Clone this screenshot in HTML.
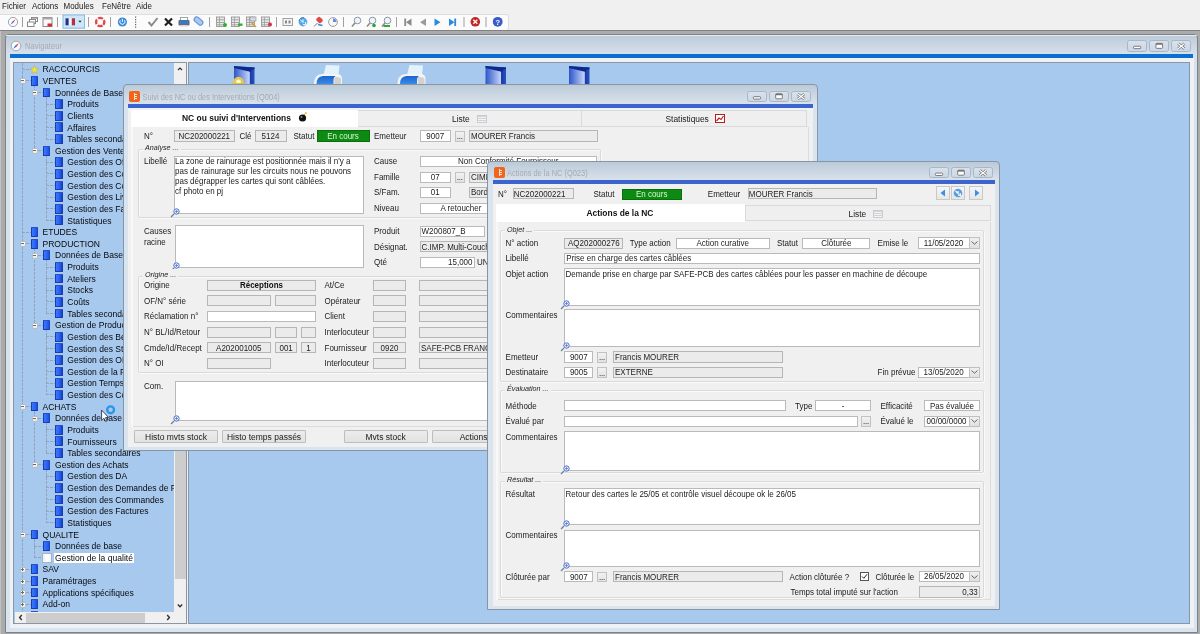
<!DOCTYPE html>
<html><head><meta charset="utf-8"><style>
html,body{margin:0;padding:0;width:1200px;height:634px;overflow:hidden;background:#ababab}
body{will-change:transform}
div{position:absolute}
.t{white-space:pre;font-family:"Liberation Sans",sans-serif;color:#111;transform-origin:0 7.8px;transform:scaleY(1.12)}
</style></head><body>
<div style="left:0px;top:0px;width:1200px;height:634px;background:#ababab"></div>
<div style="left:0px;top:0px;width:1200px;height:30px;background:#f0f0f0"></div>
<div class="t" style="left:2px;top:1.53px;font-size:8px;line-height:10px;color:#1a1a1a">Fichier</div>
<div class="t" style="left:32px;top:1.53px;font-size:8px;line-height:10px;color:#1a1a1a">Actions</div>
<div class="t" style="left:63.5px;top:1.53px;font-size:8px;line-height:10px;color:#1a1a1a">Modules</div>
<div class="t" style="left:102px;top:1.53px;font-size:8px;line-height:10px;color:#1a1a1a">FeNêtre</div>
<div class="t" style="left:136px;top:1.53px;font-size:8px;line-height:10px;color:#1a1a1a">Aide</div>
<div style="left:0px;top:13.5px;width:508px;height:15.5px;background:#fbfbfb;border:1px solid #dedede;border-left:none;border-radius:0 3px 3px 0"></div>
<div style="left:0px;top:29.5px;width:1200px;height:1.5px;background:#808080"></div>
<svg style="position:absolute;left:0;top:0" width="510" height="31" viewBox="0 0 510 31"><rect x="22.0" y="17" width="1" height="10" fill="#a0a0a0"/><rect x="57.0" y="17" width="1" height="10" fill="#a0a0a0"/><rect x="88.0" y="17" width="1" height="10" fill="#a0a0a0"/><rect x="110.0" y="17" width="1" height="10" fill="#a0a0a0"/><rect x="209.0" y="17" width="1" height="10" fill="#a0a0a0"/><rect x="276.0" y="17" width="1" height="10" fill="#a0a0a0"/><rect x="343.0" y="17" width="1" height="10" fill="#a0a0a0"/><rect x="396.0" y="17" width="1" height="10" fill="#a0a0a0"/><rect x="463.5" y="17" width="1" height="10" fill="#a0a0a0"/><rect x="485.5" y="17" width="1" height="10" fill="#a0a0a0"/><rect x="135" y="16.5" width="1.2" height="1.2" fill="#606060"/><rect x="135" y="19.0" width="1.2" height="1.2" fill="#606060"/><rect x="135" y="21.5" width="1.2" height="1.2" fill="#606060"/><rect x="135" y="24.0" width="1.2" height="1.2" fill="#606060"/><rect x="135" y="26.5" width="1.2" height="1.2" fill="#606060"/><circle cx="13" cy="22" r="4.6" fill="#fafcff" stroke="#9aa4b0" stroke-width="1"/><path d="M15.5 19.3 L13.6 22.6 L12.4 21.4Z" fill="#e04040"/><path d="M10.5 24.7 L12.4 21.4 L13.6 22.6Z" fill="#3a7ae0"/><rect x="31.5" y="17.5" width="6" height="4" fill="#fff" stroke="#888"/><rect x="29.5" y="19.5" width="6" height="4" fill="#fff" stroke="#888"/><rect x="27.5" y="22" width="6.5" height="4.5" fill="#fff" stroke="#888"/><rect x="31.5" y="17.5" width="6" height="1.2" fill="#999"/><rect x="43" y="17.5" width="9" height="9" fill="#fafafa" stroke="#8a8a8a"/><rect x="43" y="17.5" width="9" height="2" fill="#aaa"/><rect x="47.5" y="23.5" width="4.5" height="3" fill="#d03030"/><rect x="63" y="15" width="21.5" height="13.2" fill="#cde6f8" stroke="#84b9ea"/><rect x="65.5" y="18.3" width="3.3" height="7" fill="#1e3590"/><rect x="68.8" y="18.3" width="3" height="7" fill="#f4f4f8"/><rect x="71.8" y="18.3" width="3.2" height="7" fill="#b03048"/><path d="M78.5 20.8 L81.5 20.8 L80 22.6Z" fill="#111"/><circle cx="100.2" cy="22" r="4.1" fill="none" stroke="#e04848" stroke-width="2.4"/><circle cx="100.2" cy="22" r="4.1" fill="none" stroke="#fff" stroke-width="2.4" stroke-dasharray="1.6 4.84" stroke-dashoffset="0.8" transform="rotate(45 100.2 22)"/><circle cx="122.4" cy="22" r="4.6" fill="#3a8ad8"/><path d="M120.2 20.3 A2.6 2.6 0 1 0 124.6 20.3" stroke="#fff" stroke-width="1" fill="none"/><rect x="121.9" y="18.8" width="1" height="3" fill="#fff"/><path d="M148.5 22 L151.5 25.5 L157.5 18" stroke="#8a8a8a" stroke-width="2" fill="none"/><path d="M165 18.5 L172 25.5 M172 18.5 L165 25.5" stroke="#202020" stroke-width="2.2"/><rect x="180.5" y="17.5" width="7" height="3" fill="#fff" stroke="#9aa"/><rect x="178.5" y="20" width="11" height="5.5" rx="1" fill="#5a6e88"/><rect x="180" y="21" width="8" height="3" fill="#3a78c8"/><rect x="180.5" y="25" width="7" height="1.8" fill="#ddd"/><rect x="193.5" y="18.5" width="10" height="5" rx="2.5" fill="#a8c8f0" stroke="#5a8ad8" stroke-width="1" transform="rotate(40 198.5 21)"/><rect x="216.5" y="17" width="8" height="9.5" fill="#e8e8e8" stroke="#8a8a8a" stroke-width="0.8"/><rect x="217.0" y="19.5" width="7" height="0.7" fill="#8a8a8a"/><rect x="217.0" y="22" width="7" height="0.7" fill="#8a8a8a"/><rect x="217.0" y="24.5" width="7" height="0.7" fill="#8a8a8a"/><rect x="219.0" y="17" width="0.7" height="9.5" fill="#9a9a9a"/><rect x="231.5" y="17" width="8" height="9.5" fill="#e8e8e8" stroke="#8a8a8a" stroke-width="0.8"/><rect x="232.0" y="19.5" width="7" height="0.7" fill="#8a8a8a"/><rect x="232.0" y="22" width="7" height="0.7" fill="#8a8a8a"/><rect x="232.0" y="24.5" width="7" height="0.7" fill="#8a8a8a"/><rect x="234.0" y="17" width="0.7" height="9.5" fill="#9a9a9a"/><rect x="246.5" y="17" width="8" height="9.5" fill="#e8e8e8" stroke="#8a8a8a" stroke-width="0.8"/><rect x="247.0" y="19.5" width="7" height="0.7" fill="#8a8a8a"/><rect x="247.0" y="22" width="7" height="0.7" fill="#8a8a8a"/><rect x="247.0" y="24.5" width="7" height="0.7" fill="#8a8a8a"/><rect x="249.0" y="17" width="0.7" height="9.5" fill="#9a9a9a"/><rect x="261.5" y="17" width="8" height="9.5" fill="#e8e8e8" stroke="#8a8a8a" stroke-width="0.8"/><rect x="262.0" y="19.5" width="7" height="0.7" fill="#8a8a8a"/><rect x="262.0" y="22" width="7" height="0.7" fill="#8a8a8a"/><rect x="262.0" y="24.5" width="7" height="0.7" fill="#8a8a8a"/><rect x="264.0" y="17" width="0.7" height="9.5" fill="#9a9a9a"/><circle cx="225" cy="25" r="2" fill="#2cb030"/><rect x="238" y="23.5" width="4.5" height="2.4" fill="#30b030"/><path d="M251 22 L256 27" stroke="#d0a020" stroke-width="1.5"/><rect x="250" y="17" width="6" height="4" fill="#d8d8e8" stroke="#8a8a8a" stroke-width="0.6"/><circle cx="270" cy="24.5" r="2" fill="#d83040"/><rect x="283" y="18.5" width="9.5" height="7" fill="#f6f6f6" stroke="#a0a0a0"/><rect x="285" y="20.5" width="2" height="3" fill="#888"/><rect x="288.5" y="20.5" width="2" height="3" fill="#888"/><circle cx="303" cy="22" r="4.4" fill="#5aa8e8"/><path d="M300 19.5 L303 22.5 L303 19.5 M303 24.5 L306 25 L305.5 22" stroke="#fff" stroke-width="1" fill="none"/><path d="M299 21 Q300 17 304 17.8" stroke="#2a78c8" stroke-width="1" fill="none"/><path d="M314 26.5 L317.5 23" stroke="#6a7a90" stroke-width="1"/><rect x="316.5" y="17.5" width="6" height="5" rx="1.5" fill="#e04848" transform="rotate(45 319.5 20)"/><path d="M318 24.5 L322.5 25.5" stroke="#3a88d8" stroke-width="1.5"/><circle cx="333" cy="22" r="4.4" fill="#f8f8f8" stroke="#9aa0a8" stroke-width="1"/><path d="M333 22 L333 18.5 A3.5 3.5 0 0 1 336.5 22Z" fill="#6a8ae0"/><circle cx="357.5" cy="20.5" r="3.3" fill="#eef4fa" stroke="#8a96a4" stroke-width="1"/><path d="M355.0 23 L352.0 26.5" stroke="#8a8a8a" stroke-width="1.6"/><circle cx="372.5" cy="20.5" r="3.3" fill="#eef4fa" stroke="#8a96a4" stroke-width="1"/><path d="M370.0 23 L367.0 26.5" stroke="#8a8a8a" stroke-width="1.6"/><circle cx="387.5" cy="20.5" r="3.3" fill="#eef4fa" stroke="#8a96a4" stroke-width="1"/><path d="M385.0 23 L382.0 26.5" stroke="#8a8a8a" stroke-width="1.6"/><circle cx="374" cy="25.5" r="1.8" fill="#20a830"/><rect x="383.5" y="25" width="6.5" height="2" fill="#30a840"/><rect x="404.3" y="18.5" width="1.8" height="7.5" fill="#8a8a8a"/><path d="M411.5 18.5 L406 22.2 L411.5 26Z" fill="#8a8a8a"/><path d="M426 18.5 L420 22.2 L426 26Z" fill="#9a9a9a"/><path d="M434.5 18.5 L440.5 22.2 L434.5 26Z" fill="#2a8ae0"/><path d="M449 18.5 L454.5 22.2 L449 26Z" fill="#2a8ae0"/><rect x="454.3" y="18.5" width="1.8" height="7.5" fill="#2a8ae0"/><circle cx="475.3" cy="21.8" r="4.8" fill="#c02828"/><path d="M473.3 19.8 L477.3 23.8 M477.3 19.8 L473.3 23.8" stroke="#fff" stroke-width="1.3"/><circle cx="497.7" cy="21.8" r="4.9" fill="#3a5ac8"/><text x="497.7" y="24.6" font-size="7.5" font-weight="bold" fill="#fff" text-anchor="middle" font-family="Liberation Sans">?</text></svg>
<div style="left:0px;top:31px;width:1.3px;height:603px;background:#c2c2c2"></div>
<div style="left:5px;top:34px;width:1193px;height:599px;background:linear-gradient(#bccad8,#d6e1ec 19px,#d9e4ef);border:1px solid #7c8089;border-radius:4px 4px 0 0;box-sizing:border-box"></div>
<div style="left:6px;top:35px;width:1191px;height:1px;background:#e4ecf4;border-radius:3px 3px 0 0"></div>
<div class="t" style="left:25px;top:42.45px;font-size:7.65px;line-height:10px;color:#a6aab0">Navigateur</div>
<svg style="position:absolute;left:10.3px;top:40.2px" width="12" height="12" viewBox="10.3 40.2 12 12"><circle cx="16.3" cy="46.2" r="4.8" fill="#fafcff" stroke="#a0a8b2" stroke-width="1"/><path d="M19.1 43.400000000000006 L17.0 46.900000000000006 L15.600000000000001 45.5Z" fill="#e04040"/><path d="M13.5 49.0 L15.600000000000001 45.5 L17.0 46.900000000000006Z" fill="#3a7ae0"/></svg>
<div style="left:10px;top:54px;width:1183px;height:4px;background:#0b6fd0"></div>
<div style="left:9.5px;top:58px;width:1184px;height:569.5px;background:#eff2f5"></div>
<div style="left:13px;top:62px;width:174px;height:562px;background:#a8c9ee;border:1px solid #8a96a6;box-sizing:border-box"></div>
<div style="left:188px;top:62px;width:1002px;height:562px;background:#a8c9ee;border:1px solid #8a96a6;box-sizing:border-box"></div>
<div style="left:15px;top:63px;width:159px;height:549px;overflow:hidden;background:#a8c9ee">
<div style="left:7px;top:0px;width:1px;height:556.91px;background:repeating-linear-gradient(#92a3bb 0 3px,transparent 3px 4px)"></div>
<div style="left:19px;top:17.929999999999993px;width:1px;height:69.78000000000002px;background:repeating-linear-gradient(#92a3bb 0 3px,transparent 3px 4px)"></div>
<div style="left:31px;top:29.560000000000002px;width:1px;height:46.51999999999998px;background:repeating-linear-gradient(#92a3bb 0 3px,transparent 3px 4px)"></div>
<div style="left:31px;top:87.71000000000001px;width:1px;height:69.78px;background:repeating-linear-gradient(#92a3bb 0 3px,transparent 3px 4px)"></div>
<div style="left:19px;top:180.75px;width:1px;height:81.41000000000003px;background:repeating-linear-gradient(#92a3bb 0 3px,transparent 3px 4px)"></div>
<div style="left:31px;top:192.38px;width:1px;height:58.150000000000034px;background:repeating-linear-gradient(#92a3bb 0 3px,transparent 3px 4px)"></div>
<div style="left:31px;top:262.16px;width:1px;height:69.78000000000003px;background:repeating-linear-gradient(#92a3bb 0 3px,transparent 3px 4px)"></div>
<div style="left:19px;top:343.57000000000005px;width:1px;height:58.14999999999998px;background:repeating-linear-gradient(#92a3bb 0 3px,transparent 3px 4px)"></div>
<div style="left:31px;top:355.20000000000005px;width:1px;height:34.889999999999986px;background:repeating-linear-gradient(#92a3bb 0 3px,transparent 3px 4px)"></div>
<div style="left:31px;top:401.72px;width:1px;height:58.14999999999998px;background:repeating-linear-gradient(#92a3bb 0 3px,transparent 3px 4px)"></div>
<div style="left:19px;top:471.5px;width:1px;height:23.25999999999999px;background:repeating-linear-gradient(#92a3bb 0 3px,transparent 3px 4px)"></div>
<div style="left:7px;top:5.80px;width:8.5px;height:1px;background:repeating-linear-gradient(90deg,#92a3bb 0 3px,transparent 3px 4px)"></div>
<svg style="position:absolute;left:15.0px;top:1.80px" width="9" height="9" viewBox="0 0 10 10"><path d="M5 0.4 L6.3 3.6 L9.7 3.8 L7.1 6 L7.9 9.4 L5 7.6 L2.1 9.4 L2.9 6 L0.3 3.8 L3.7 3.6Z" fill="#f2e24a" stroke="#c8b040" stroke-width="0.6"/></svg>
<div class="t" style="left:27.5px;top:1.39px;font-size:8.55px;line-height:10px;color:#05080e">RACCOURCIS</div>
<div style="left:7px;top:17.43px;width:8.5px;height:1px;background:repeating-linear-gradient(90deg,#92a3bb 0 3px,transparent 3px 4px)"></div>
<div style="left:4.5px;top:15.43px;width:4px;height:4px;border:1px solid #b4bcc6;border-radius:1.5px;background:linear-gradient(#fff,#e4e8ee)"></div>
<div style="left:6.0px;top:17.43px;width:3px;height:1px;background:#6a6a6a"></div>
<div style="left:15.5px;top:12.93px;width:7.5px;height:9.8px;background:linear-gradient(90deg,#1a3cb0 0,#1a3cb0 1px,#3a78fa 1px,#2a64f4 4px,#1a50dc 6px,#1a3cb0 7px);box-shadow:inset 0 -1px 0 #1a3cb0,inset 0 1px 0 #2a50c8;border-radius:0 1px 1px 0"></div>
<div class="t" style="left:27.5px;top:13.02px;font-size:8.55px;line-height:10px;color:#05080e">VENTES</div>
<div style="left:19px;top:29.06px;width:8.5px;height:1px;background:repeating-linear-gradient(90deg,#92a3bb 0 3px,transparent 3px 4px)"></div>
<div style="left:16.5px;top:27.06px;width:4px;height:4px;border:1px solid #b4bcc6;border-radius:1.5px;background:linear-gradient(#fff,#e4e8ee)"></div>
<div style="left:18.0px;top:29.06px;width:3px;height:1px;background:#6a6a6a"></div>
<div style="left:27.5px;top:24.56px;width:7.5px;height:9.8px;background:linear-gradient(90deg,#1a3cb0 0,#1a3cb0 1px,#3a78fa 1px,#2a64f4 4px,#1a50dc 6px,#1a3cb0 7px);box-shadow:inset 0 -1px 0 #1a3cb0,inset 0 1px 0 #2a50c8;border-radius:0 1px 1px 0"></div>
<div class="t" style="left:40px;top:24.65px;font-size:8.55px;line-height:10px;color:#05080e">Données de Base</div>
<div style="left:31px;top:40.69px;width:9px;height:1px;background:repeating-linear-gradient(90deg,#92a3bb 0 3px,transparent 3px 4px)"></div>
<div style="left:40px;top:36.19px;width:7.5px;height:9.8px;background:linear-gradient(90deg,#1a3cb0 0,#1a3cb0 1px,#3a78fa 1px,#2a64f4 4px,#1a50dc 6px,#1a3cb0 7px);box-shadow:inset 0 -1px 0 #1a3cb0,inset 0 1px 0 #2a50c8;border-radius:0 1px 1px 0"></div>
<div class="t" style="left:52.3px;top:36.28px;font-size:8.55px;line-height:10px;color:#05080e">Produits</div>
<div style="left:31px;top:52.32px;width:9px;height:1px;background:repeating-linear-gradient(90deg,#92a3bb 0 3px,transparent 3px 4px)"></div>
<div style="left:40px;top:47.82px;width:7.5px;height:9.8px;background:linear-gradient(90deg,#1a3cb0 0,#1a3cb0 1px,#3a78fa 1px,#2a64f4 4px,#1a50dc 6px,#1a3cb0 7px);box-shadow:inset 0 -1px 0 #1a3cb0,inset 0 1px 0 #2a50c8;border-radius:0 1px 1px 0"></div>
<div class="t" style="left:52.3px;top:47.91px;font-size:8.55px;line-height:10px;color:#05080e">Clients</div>
<div style="left:31px;top:63.95px;width:9px;height:1px;background:repeating-linear-gradient(90deg,#92a3bb 0 3px,transparent 3px 4px)"></div>
<div style="left:40px;top:59.45px;width:7.5px;height:9.8px;background:linear-gradient(90deg,#1a3cb0 0,#1a3cb0 1px,#3a78fa 1px,#2a64f4 4px,#1a50dc 6px,#1a3cb0 7px);box-shadow:inset 0 -1px 0 #1a3cb0,inset 0 1px 0 #2a50c8;border-radius:0 1px 1px 0"></div>
<div class="t" style="left:52.3px;top:59.54px;font-size:8.55px;line-height:10px;color:#05080e">Affaires</div>
<div style="left:31px;top:75.58px;width:9px;height:1px;background:repeating-linear-gradient(90deg,#92a3bb 0 3px,transparent 3px 4px)"></div>
<div style="left:40px;top:71.08px;width:7.5px;height:9.8px;background:linear-gradient(90deg,#1a3cb0 0,#1a3cb0 1px,#3a78fa 1px,#2a64f4 4px,#1a50dc 6px,#1a3cb0 7px);box-shadow:inset 0 -1px 0 #1a3cb0,inset 0 1px 0 #2a50c8;border-radius:0 1px 1px 0"></div>
<div class="t" style="left:52.3px;top:71.17px;font-size:8.55px;line-height:10px;color:#05080e">Tables secondaires</div>
<div style="left:19px;top:87.21px;width:8.5px;height:1px;background:repeating-linear-gradient(90deg,#92a3bb 0 3px,transparent 3px 4px)"></div>
<div style="left:16.5px;top:85.21px;width:4px;height:4px;border:1px solid #b4bcc6;border-radius:1.5px;background:linear-gradient(#fff,#e4e8ee)"></div>
<div style="left:18.0px;top:87.21px;width:3px;height:1px;background:#6a6a6a"></div>
<div style="left:27.5px;top:82.71px;width:7.5px;height:9.8px;background:linear-gradient(90deg,#1a3cb0 0,#1a3cb0 1px,#3a78fa 1px,#2a64f4 4px,#1a50dc 6px,#1a3cb0 7px);box-shadow:inset 0 -1px 0 #1a3cb0,inset 0 1px 0 #2a50c8;border-radius:0 1px 1px 0"></div>
<div class="t" style="left:40px;top:82.80px;font-size:8.55px;line-height:10px;color:#05080e">Gestion des Ventes</div>
<div style="left:31px;top:98.84px;width:9px;height:1px;background:repeating-linear-gradient(90deg,#92a3bb 0 3px,transparent 3px 4px)"></div>
<div style="left:40px;top:94.34px;width:7.5px;height:9.8px;background:linear-gradient(90deg,#1a3cb0 0,#1a3cb0 1px,#3a78fa 1px,#2a64f4 4px,#1a50dc 6px,#1a3cb0 7px);box-shadow:inset 0 -1px 0 #1a3cb0,inset 0 1px 0 #2a50c8;border-radius:0 1px 1px 0"></div>
<div class="t" style="left:52.3px;top:94.43px;font-size:8.55px;line-height:10px;color:#05080e">Gestion des Offres</div>
<div style="left:31px;top:110.47px;width:9px;height:1px;background:repeating-linear-gradient(90deg,#92a3bb 0 3px,transparent 3px 4px)"></div>
<div style="left:40px;top:105.97px;width:7.5px;height:9.8px;background:linear-gradient(90deg,#1a3cb0 0,#1a3cb0 1px,#3a78fa 1px,#2a64f4 4px,#1a50dc 6px,#1a3cb0 7px);box-shadow:inset 0 -1px 0 #1a3cb0,inset 0 1px 0 #2a50c8;border-radius:0 1px 1px 0"></div>
<div class="t" style="left:52.3px;top:106.06px;font-size:8.55px;line-height:10px;color:#05080e">Gestion des Commandes</div>
<div style="left:31px;top:122.10px;width:9px;height:1px;background:repeating-linear-gradient(90deg,#92a3bb 0 3px,transparent 3px 4px)"></div>
<div style="left:40px;top:117.60px;width:7.5px;height:9.8px;background:linear-gradient(90deg,#1a3cb0 0,#1a3cb0 1px,#3a78fa 1px,#2a64f4 4px,#1a50dc 6px,#1a3cb0 7px);box-shadow:inset 0 -1px 0 #1a3cb0,inset 0 1px 0 #2a50c8;border-radius:0 1px 1px 0"></div>
<div class="t" style="left:52.3px;top:117.69px;font-size:8.55px;line-height:10px;color:#05080e">Gestion des Contrats</div>
<div style="left:31px;top:133.73px;width:9px;height:1px;background:repeating-linear-gradient(90deg,#92a3bb 0 3px,transparent 3px 4px)"></div>
<div style="left:40px;top:129.23px;width:7.5px;height:9.8px;background:linear-gradient(90deg,#1a3cb0 0,#1a3cb0 1px,#3a78fa 1px,#2a64f4 4px,#1a50dc 6px,#1a3cb0 7px);box-shadow:inset 0 -1px 0 #1a3cb0,inset 0 1px 0 #2a50c8;border-radius:0 1px 1px 0"></div>
<div class="t" style="left:52.3px;top:129.32px;font-size:8.55px;line-height:10px;color:#05080e">Gestion des Livraisons</div>
<div style="left:31px;top:145.36px;width:9px;height:1px;background:repeating-linear-gradient(90deg,#92a3bb 0 3px,transparent 3px 4px)"></div>
<div style="left:40px;top:140.86px;width:7.5px;height:9.8px;background:linear-gradient(90deg,#1a3cb0 0,#1a3cb0 1px,#3a78fa 1px,#2a64f4 4px,#1a50dc 6px,#1a3cb0 7px);box-shadow:inset 0 -1px 0 #1a3cb0,inset 0 1px 0 #2a50c8;border-radius:0 1px 1px 0"></div>
<div class="t" style="left:52.3px;top:140.95px;font-size:8.55px;line-height:10px;color:#05080e">Gestion des Factures</div>
<div style="left:31px;top:156.99px;width:9px;height:1px;background:repeating-linear-gradient(90deg,#92a3bb 0 3px,transparent 3px 4px)"></div>
<div style="left:40px;top:152.49px;width:7.5px;height:9.8px;background:linear-gradient(90deg,#1a3cb0 0,#1a3cb0 1px,#3a78fa 1px,#2a64f4 4px,#1a50dc 6px,#1a3cb0 7px);box-shadow:inset 0 -1px 0 #1a3cb0,inset 0 1px 0 #2a50c8;border-radius:0 1px 1px 0"></div>
<div class="t" style="left:52.3px;top:152.58px;font-size:8.55px;line-height:10px;color:#05080e">Statistiques</div>
<div style="left:7px;top:168.62px;width:8.5px;height:1px;background:repeating-linear-gradient(90deg,#92a3bb 0 3px,transparent 3px 4px)"></div>
<div style="left:15.5px;top:164.12px;width:7.5px;height:9.8px;background:linear-gradient(90deg,#1a3cb0 0,#1a3cb0 1px,#3a78fa 1px,#2a64f4 4px,#1a50dc 6px,#1a3cb0 7px);box-shadow:inset 0 -1px 0 #1a3cb0,inset 0 1px 0 #2a50c8;border-radius:0 1px 1px 0"></div>
<div class="t" style="left:27.5px;top:164.21px;font-size:8.55px;line-height:10px;color:#05080e">ETUDES</div>
<div style="left:7px;top:180.25px;width:8.5px;height:1px;background:repeating-linear-gradient(90deg,#92a3bb 0 3px,transparent 3px 4px)"></div>
<div style="left:4.5px;top:178.25px;width:4px;height:4px;border:1px solid #b4bcc6;border-radius:1.5px;background:linear-gradient(#fff,#e4e8ee)"></div>
<div style="left:6.0px;top:180.25px;width:3px;height:1px;background:#6a6a6a"></div>
<div style="left:15.5px;top:175.75px;width:7.5px;height:9.8px;background:linear-gradient(90deg,#1a3cb0 0,#1a3cb0 1px,#3a78fa 1px,#2a64f4 4px,#1a50dc 6px,#1a3cb0 7px);box-shadow:inset 0 -1px 0 #1a3cb0,inset 0 1px 0 #2a50c8;border-radius:0 1px 1px 0"></div>
<div class="t" style="left:27.5px;top:175.84px;font-size:8.55px;line-height:10px;color:#05080e">PRODUCTION</div>
<div style="left:19px;top:191.88px;width:8.5px;height:1px;background:repeating-linear-gradient(90deg,#92a3bb 0 3px,transparent 3px 4px)"></div>
<div style="left:16.5px;top:189.88px;width:4px;height:4px;border:1px solid #b4bcc6;border-radius:1.5px;background:linear-gradient(#fff,#e4e8ee)"></div>
<div style="left:18.0px;top:191.88px;width:3px;height:1px;background:#6a6a6a"></div>
<div style="left:27.5px;top:187.38px;width:7.5px;height:9.8px;background:linear-gradient(90deg,#1a3cb0 0,#1a3cb0 1px,#3a78fa 1px,#2a64f4 4px,#1a50dc 6px,#1a3cb0 7px);box-shadow:inset 0 -1px 0 #1a3cb0,inset 0 1px 0 #2a50c8;border-radius:0 1px 1px 0"></div>
<div class="t" style="left:40px;top:187.47px;font-size:8.55px;line-height:10px;color:#05080e">Données de Base</div>
<div style="left:31px;top:203.51px;width:9px;height:1px;background:repeating-linear-gradient(90deg,#92a3bb 0 3px,transparent 3px 4px)"></div>
<div style="left:40px;top:199.01px;width:7.5px;height:9.8px;background:linear-gradient(90deg,#1a3cb0 0,#1a3cb0 1px,#3a78fa 1px,#2a64f4 4px,#1a50dc 6px,#1a3cb0 7px);box-shadow:inset 0 -1px 0 #1a3cb0,inset 0 1px 0 #2a50c8;border-radius:0 1px 1px 0"></div>
<div class="t" style="left:52.3px;top:199.10px;font-size:8.55px;line-height:10px;color:#05080e">Produits</div>
<div style="left:31px;top:215.14px;width:9px;height:1px;background:repeating-linear-gradient(90deg,#92a3bb 0 3px,transparent 3px 4px)"></div>
<div style="left:40px;top:210.64px;width:7.5px;height:9.8px;background:linear-gradient(90deg,#1a3cb0 0,#1a3cb0 1px,#3a78fa 1px,#2a64f4 4px,#1a50dc 6px,#1a3cb0 7px);box-shadow:inset 0 -1px 0 #1a3cb0,inset 0 1px 0 #2a50c8;border-radius:0 1px 1px 0"></div>
<div class="t" style="left:52.3px;top:210.73px;font-size:8.55px;line-height:10px;color:#05080e">Ateliers</div>
<div style="left:31px;top:226.77px;width:9px;height:1px;background:repeating-linear-gradient(90deg,#92a3bb 0 3px,transparent 3px 4px)"></div>
<div style="left:40px;top:222.27px;width:7.5px;height:9.8px;background:linear-gradient(90deg,#1a3cb0 0,#1a3cb0 1px,#3a78fa 1px,#2a64f4 4px,#1a50dc 6px,#1a3cb0 7px);box-shadow:inset 0 -1px 0 #1a3cb0,inset 0 1px 0 #2a50c8;border-radius:0 1px 1px 0"></div>
<div class="t" style="left:52.3px;top:222.36px;font-size:8.55px;line-height:10px;color:#05080e">Stocks</div>
<div style="left:31px;top:238.40px;width:9px;height:1px;background:repeating-linear-gradient(90deg,#92a3bb 0 3px,transparent 3px 4px)"></div>
<div style="left:40px;top:233.90px;width:7.5px;height:9.8px;background:linear-gradient(90deg,#1a3cb0 0,#1a3cb0 1px,#3a78fa 1px,#2a64f4 4px,#1a50dc 6px,#1a3cb0 7px);box-shadow:inset 0 -1px 0 #1a3cb0,inset 0 1px 0 #2a50c8;border-radius:0 1px 1px 0"></div>
<div class="t" style="left:52.3px;top:233.99px;font-size:8.55px;line-height:10px;color:#05080e">Coûts</div>
<div style="left:31px;top:250.03px;width:9px;height:1px;background:repeating-linear-gradient(90deg,#92a3bb 0 3px,transparent 3px 4px)"></div>
<div style="left:40px;top:245.53px;width:7.5px;height:9.8px;background:linear-gradient(90deg,#1a3cb0 0,#1a3cb0 1px,#3a78fa 1px,#2a64f4 4px,#1a50dc 6px,#1a3cb0 7px);box-shadow:inset 0 -1px 0 #1a3cb0,inset 0 1px 0 #2a50c8;border-radius:0 1px 1px 0"></div>
<div class="t" style="left:52.3px;top:245.62px;font-size:8.55px;line-height:10px;color:#05080e">Tables secondaires</div>
<div style="left:19px;top:261.66px;width:8.5px;height:1px;background:repeating-linear-gradient(90deg,#92a3bb 0 3px,transparent 3px 4px)"></div>
<div style="left:16.5px;top:259.66px;width:4px;height:4px;border:1px solid #b4bcc6;border-radius:1.5px;background:linear-gradient(#fff,#e4e8ee)"></div>
<div style="left:18.0px;top:261.66px;width:3px;height:1px;background:#6a6a6a"></div>
<div style="left:27.5px;top:257.16px;width:7.5px;height:9.8px;background:linear-gradient(90deg,#1a3cb0 0,#1a3cb0 1px,#3a78fa 1px,#2a64f4 4px,#1a50dc 6px,#1a3cb0 7px);box-shadow:inset 0 -1px 0 #1a3cb0,inset 0 1px 0 #2a50c8;border-radius:0 1px 1px 0"></div>
<div class="t" style="left:40px;top:257.25px;font-size:8.55px;line-height:10px;color:#05080e">Gestion de Production</div>
<div style="left:31px;top:273.29px;width:9px;height:1px;background:repeating-linear-gradient(90deg,#92a3bb 0 3px,transparent 3px 4px)"></div>
<div style="left:40px;top:268.79px;width:7.5px;height:9.8px;background:linear-gradient(90deg,#1a3cb0 0,#1a3cb0 1px,#3a78fa 1px,#2a64f4 4px,#1a50dc 6px,#1a3cb0 7px);box-shadow:inset 0 -1px 0 #1a3cb0,inset 0 1px 0 #2a50c8;border-radius:0 1px 1px 0"></div>
<div class="t" style="left:52.3px;top:268.88px;font-size:8.55px;line-height:10px;color:#05080e">Gestion des Besoins</div>
<div style="left:31px;top:284.92px;width:9px;height:1px;background:repeating-linear-gradient(90deg,#92a3bb 0 3px,transparent 3px 4px)"></div>
<div style="left:40px;top:280.42px;width:7.5px;height:9.8px;background:linear-gradient(90deg,#1a3cb0 0,#1a3cb0 1px,#3a78fa 1px,#2a64f4 4px,#1a50dc 6px,#1a3cb0 7px);box-shadow:inset 0 -1px 0 #1a3cb0,inset 0 1px 0 #2a50c8;border-radius:0 1px 1px 0"></div>
<div class="t" style="left:52.3px;top:280.51px;font-size:8.55px;line-height:10px;color:#05080e">Gestion des Stocks</div>
<div style="left:31px;top:296.55px;width:9px;height:1px;background:repeating-linear-gradient(90deg,#92a3bb 0 3px,transparent 3px 4px)"></div>
<div style="left:40px;top:292.05px;width:7.5px;height:9.8px;background:linear-gradient(90deg,#1a3cb0 0,#1a3cb0 1px,#3a78fa 1px,#2a64f4 4px,#1a50dc 6px,#1a3cb0 7px);box-shadow:inset 0 -1px 0 #1a3cb0,inset 0 1px 0 #2a50c8;border-radius:0 1px 1px 0"></div>
<div class="t" style="left:52.3px;top:292.14px;font-size:8.55px;line-height:10px;color:#05080e">Gestion des OF</div>
<div style="left:31px;top:308.18px;width:9px;height:1px;background:repeating-linear-gradient(90deg,#92a3bb 0 3px,transparent 3px 4px)"></div>
<div style="left:40px;top:303.68px;width:7.5px;height:9.8px;background:linear-gradient(90deg,#1a3cb0 0,#1a3cb0 1px,#3a78fa 1px,#2a64f4 4px,#1a50dc 6px,#1a3cb0 7px);box-shadow:inset 0 -1px 0 #1a3cb0,inset 0 1px 0 #2a50c8;border-radius:0 1px 1px 0"></div>
<div class="t" style="left:52.3px;top:303.77px;font-size:8.55px;line-height:10px;color:#05080e">Gestion de la Production</div>
<div style="left:31px;top:319.81px;width:9px;height:1px;background:repeating-linear-gradient(90deg,#92a3bb 0 3px,transparent 3px 4px)"></div>
<div style="left:40px;top:315.31px;width:7.5px;height:9.8px;background:linear-gradient(90deg,#1a3cb0 0,#1a3cb0 1px,#3a78fa 1px,#2a64f4 4px,#1a50dc 6px,#1a3cb0 7px);box-shadow:inset 0 -1px 0 #1a3cb0,inset 0 1px 0 #2a50c8;border-radius:0 1px 1px 0"></div>
<div class="t" style="left:52.3px;top:315.40px;font-size:8.55px;line-height:10px;color:#05080e">Gestion Temps</div>
<div style="left:31px;top:331.44px;width:9px;height:1px;background:repeating-linear-gradient(90deg,#92a3bb 0 3px,transparent 3px 4px)"></div>
<div style="left:40px;top:326.94px;width:7.5px;height:9.8px;background:linear-gradient(90deg,#1a3cb0 0,#1a3cb0 1px,#3a78fa 1px,#2a64f4 4px,#1a50dc 6px,#1a3cb0 7px);box-shadow:inset 0 -1px 0 #1a3cb0,inset 0 1px 0 #2a50c8;border-radius:0 1px 1px 0"></div>
<div class="t" style="left:52.3px;top:327.03px;font-size:8.55px;line-height:10px;color:#05080e">Gestion des Coûts</div>
<div style="left:7px;top:343.07px;width:8.5px;height:1px;background:repeating-linear-gradient(90deg,#92a3bb 0 3px,transparent 3px 4px)"></div>
<div style="left:4.5px;top:341.07px;width:4px;height:4px;border:1px solid #b4bcc6;border-radius:1.5px;background:linear-gradient(#fff,#e4e8ee)"></div>
<div style="left:6.0px;top:343.07px;width:3px;height:1px;background:#6a6a6a"></div>
<div style="left:15.5px;top:338.57px;width:7.5px;height:9.8px;background:linear-gradient(90deg,#1a3cb0 0,#1a3cb0 1px,#3a78fa 1px,#2a64f4 4px,#1a50dc 6px,#1a3cb0 7px);box-shadow:inset 0 -1px 0 #1a3cb0,inset 0 1px 0 #2a50c8;border-radius:0 1px 1px 0"></div>
<div class="t" style="left:27.5px;top:338.66px;font-size:8.55px;line-height:10px;color:#05080e">ACHATS</div>
<div style="left:19px;top:354.70px;width:8.5px;height:1px;background:repeating-linear-gradient(90deg,#92a3bb 0 3px,transparent 3px 4px)"></div>
<div style="left:16.5px;top:352.70px;width:4px;height:4px;border:1px solid #b4bcc6;border-radius:1.5px;background:linear-gradient(#fff,#e4e8ee)"></div>
<div style="left:18.0px;top:354.70px;width:3px;height:1px;background:#6a6a6a"></div>
<div style="left:27.5px;top:350.20px;width:7.5px;height:9.8px;background:linear-gradient(90deg,#1a3cb0 0,#1a3cb0 1px,#3a78fa 1px,#2a64f4 4px,#1a50dc 6px,#1a3cb0 7px);box-shadow:inset 0 -1px 0 #1a3cb0,inset 0 1px 0 #2a50c8;border-radius:0 1px 1px 0"></div>
<div class="t" style="left:40px;top:350.29px;font-size:8.55px;line-height:10px;color:#05080e">Données de base</div>
<div style="left:31px;top:366.33px;width:9px;height:1px;background:repeating-linear-gradient(90deg,#92a3bb 0 3px,transparent 3px 4px)"></div>
<div style="left:40px;top:361.83px;width:7.5px;height:9.8px;background:linear-gradient(90deg,#1a3cb0 0,#1a3cb0 1px,#3a78fa 1px,#2a64f4 4px,#1a50dc 6px,#1a3cb0 7px);box-shadow:inset 0 -1px 0 #1a3cb0,inset 0 1px 0 #2a50c8;border-radius:0 1px 1px 0"></div>
<div class="t" style="left:52.3px;top:361.92px;font-size:8.55px;line-height:10px;color:#05080e">Produits</div>
<div style="left:31px;top:377.96px;width:9px;height:1px;background:repeating-linear-gradient(90deg,#92a3bb 0 3px,transparent 3px 4px)"></div>
<div style="left:40px;top:373.46px;width:7.5px;height:9.8px;background:linear-gradient(90deg,#1a3cb0 0,#1a3cb0 1px,#3a78fa 1px,#2a64f4 4px,#1a50dc 6px,#1a3cb0 7px);box-shadow:inset 0 -1px 0 #1a3cb0,inset 0 1px 0 #2a50c8;border-radius:0 1px 1px 0"></div>
<div class="t" style="left:52.3px;top:373.55px;font-size:8.55px;line-height:10px;color:#05080e">Fournisseurs</div>
<div style="left:31px;top:389.59px;width:9px;height:1px;background:repeating-linear-gradient(90deg,#92a3bb 0 3px,transparent 3px 4px)"></div>
<div style="left:40px;top:385.09px;width:7.5px;height:9.8px;background:linear-gradient(90deg,#1a3cb0 0,#1a3cb0 1px,#3a78fa 1px,#2a64f4 4px,#1a50dc 6px,#1a3cb0 7px);box-shadow:inset 0 -1px 0 #1a3cb0,inset 0 1px 0 #2a50c8;border-radius:0 1px 1px 0"></div>
<div class="t" style="left:52.3px;top:385.18px;font-size:8.55px;line-height:10px;color:#05080e">Tables secondaires</div>
<div style="left:19px;top:401.22px;width:8.5px;height:1px;background:repeating-linear-gradient(90deg,#92a3bb 0 3px,transparent 3px 4px)"></div>
<div style="left:16.5px;top:399.22px;width:4px;height:4px;border:1px solid #b4bcc6;border-radius:1.5px;background:linear-gradient(#fff,#e4e8ee)"></div>
<div style="left:18.0px;top:401.22px;width:3px;height:1px;background:#6a6a6a"></div>
<div style="left:27.5px;top:396.72px;width:7.5px;height:9.8px;background:linear-gradient(90deg,#1a3cb0 0,#1a3cb0 1px,#3a78fa 1px,#2a64f4 4px,#1a50dc 6px,#1a3cb0 7px);box-shadow:inset 0 -1px 0 #1a3cb0,inset 0 1px 0 #2a50c8;border-radius:0 1px 1px 0"></div>
<div class="t" style="left:40px;top:396.81px;font-size:8.55px;line-height:10px;color:#05080e">Gestion des Achats</div>
<div style="left:31px;top:412.85px;width:9px;height:1px;background:repeating-linear-gradient(90deg,#92a3bb 0 3px,transparent 3px 4px)"></div>
<div style="left:40px;top:408.35px;width:7.5px;height:9.8px;background:linear-gradient(90deg,#1a3cb0 0,#1a3cb0 1px,#3a78fa 1px,#2a64f4 4px,#1a50dc 6px,#1a3cb0 7px);box-shadow:inset 0 -1px 0 #1a3cb0,inset 0 1px 0 #2a50c8;border-radius:0 1px 1px 0"></div>
<div class="t" style="left:52.3px;top:408.44px;font-size:8.55px;line-height:10px;color:#05080e">Gestion des DA</div>
<div style="left:31px;top:424.48px;width:9px;height:1px;background:repeating-linear-gradient(90deg,#92a3bb 0 3px,transparent 3px 4px)"></div>
<div style="left:40px;top:419.98px;width:7.5px;height:9.8px;background:linear-gradient(90deg,#1a3cb0 0,#1a3cb0 1px,#3a78fa 1px,#2a64f4 4px,#1a50dc 6px,#1a3cb0 7px);box-shadow:inset 0 -1px 0 #1a3cb0,inset 0 1px 0 #2a50c8;border-radius:0 1px 1px 0"></div>
<div class="t" style="left:52.3px;top:420.07px;font-size:8.55px;line-height:10px;color:#05080e">Gestion des Demandes de Prix</div>
<div style="left:31px;top:436.11px;width:9px;height:1px;background:repeating-linear-gradient(90deg,#92a3bb 0 3px,transparent 3px 4px)"></div>
<div style="left:40px;top:431.61px;width:7.5px;height:9.8px;background:linear-gradient(90deg,#1a3cb0 0,#1a3cb0 1px,#3a78fa 1px,#2a64f4 4px,#1a50dc 6px,#1a3cb0 7px);box-shadow:inset 0 -1px 0 #1a3cb0,inset 0 1px 0 #2a50c8;border-radius:0 1px 1px 0"></div>
<div class="t" style="left:52.3px;top:431.70px;font-size:8.55px;line-height:10px;color:#05080e">Gestion des Commandes</div>
<div style="left:31px;top:447.74px;width:9px;height:1px;background:repeating-linear-gradient(90deg,#92a3bb 0 3px,transparent 3px 4px)"></div>
<div style="left:40px;top:443.24px;width:7.5px;height:9.8px;background:linear-gradient(90deg,#1a3cb0 0,#1a3cb0 1px,#3a78fa 1px,#2a64f4 4px,#1a50dc 6px,#1a3cb0 7px);box-shadow:inset 0 -1px 0 #1a3cb0,inset 0 1px 0 #2a50c8;border-radius:0 1px 1px 0"></div>
<div class="t" style="left:52.3px;top:443.33px;font-size:8.55px;line-height:10px;color:#05080e">Gestion des Factures</div>
<div style="left:31px;top:459.37px;width:9px;height:1px;background:repeating-linear-gradient(90deg,#92a3bb 0 3px,transparent 3px 4px)"></div>
<div style="left:40px;top:454.87px;width:7.5px;height:9.8px;background:linear-gradient(90deg,#1a3cb0 0,#1a3cb0 1px,#3a78fa 1px,#2a64f4 4px,#1a50dc 6px,#1a3cb0 7px);box-shadow:inset 0 -1px 0 #1a3cb0,inset 0 1px 0 #2a50c8;border-radius:0 1px 1px 0"></div>
<div class="t" style="left:52.3px;top:454.96px;font-size:8.55px;line-height:10px;color:#05080e">Statistiques</div>
<div style="left:7px;top:471.00px;width:8.5px;height:1px;background:repeating-linear-gradient(90deg,#92a3bb 0 3px,transparent 3px 4px)"></div>
<div style="left:4.5px;top:469.00px;width:4px;height:4px;border:1px solid #b4bcc6;border-radius:1.5px;background:linear-gradient(#fff,#e4e8ee)"></div>
<div style="left:6.0px;top:471.00px;width:3px;height:1px;background:#6a6a6a"></div>
<div style="left:15.5px;top:466.50px;width:7.5px;height:9.8px;background:linear-gradient(90deg,#1a3cb0 0,#1a3cb0 1px,#3a78fa 1px,#2a64f4 4px,#1a50dc 6px,#1a3cb0 7px);box-shadow:inset 0 -1px 0 #1a3cb0,inset 0 1px 0 #2a50c8;border-radius:0 1px 1px 0"></div>
<div class="t" style="left:27.5px;top:466.59px;font-size:8.55px;line-height:10px;color:#05080e">QUALITE</div>
<div style="left:19px;top:482.63px;width:8.5px;height:1px;background:repeating-linear-gradient(90deg,#92a3bb 0 3px,transparent 3px 4px)"></div>
<div style="left:27.5px;top:478.13px;width:7.5px;height:9.8px;background:linear-gradient(90deg,#1a3cb0 0,#1a3cb0 1px,#3a78fa 1px,#2a64f4 4px,#1a50dc 6px,#1a3cb0 7px);box-shadow:inset 0 -1px 0 #1a3cb0,inset 0 1px 0 #2a50c8;border-radius:0 1px 1px 0"></div>
<div class="t" style="left:40px;top:478.22px;font-size:8.55px;line-height:10px;color:#05080e">Données de base</div>
<div style="left:19px;top:494.26px;width:8.5px;height:1px;background:repeating-linear-gradient(90deg,#92a3bb 0 3px,transparent 3px 4px)"></div>
<div style="left:26.5px;top:490.26px;width:8px;height:8px;background:linear-gradient(90deg,#e8eef6,#fff 45%,#c8d0da 50%,#fff 55%,#eef2f6);border:1px solid #a8b4c2"></div>
<div style="left:38.5px;top:489.76px;width:80px;height:10.5px;background:#fff"></div>
<div class="t" style="left:40px;top:489.85px;font-size:8.55px;line-height:10px;color:#05080e">Gestion de la qualité</div>
<div style="left:7px;top:505.89px;width:8.5px;height:1px;background:repeating-linear-gradient(90deg,#92a3bb 0 3px,transparent 3px 4px)"></div>
<div style="left:4.5px;top:503.89px;width:4px;height:4px;border:1px solid #b4bcc6;border-radius:1.5px;background:linear-gradient(#fff,#e4e8ee)"></div>
<div style="left:6.0px;top:505.89px;width:3px;height:1px;background:#6a6a6a"></div>
<div style="left:7.0px;top:504.89px;width:1px;height:3px;background:#6a6a6a"></div>
<div style="left:15.5px;top:501.39px;width:7.5px;height:9.8px;background:linear-gradient(90deg,#1a3cb0 0,#1a3cb0 1px,#3a78fa 1px,#2a64f4 4px,#1a50dc 6px,#1a3cb0 7px);box-shadow:inset 0 -1px 0 #1a3cb0,inset 0 1px 0 #2a50c8;border-radius:0 1px 1px 0"></div>
<div class="t" style="left:27.5px;top:501.48px;font-size:8.55px;line-height:10px;color:#05080e">SAV</div>
<div style="left:7px;top:517.52px;width:8.5px;height:1px;background:repeating-linear-gradient(90deg,#92a3bb 0 3px,transparent 3px 4px)"></div>
<div style="left:4.5px;top:515.52px;width:4px;height:4px;border:1px solid #b4bcc6;border-radius:1.5px;background:linear-gradient(#fff,#e4e8ee)"></div>
<div style="left:6.0px;top:517.52px;width:3px;height:1px;background:#6a6a6a"></div>
<div style="left:7.0px;top:516.52px;width:1px;height:3px;background:#6a6a6a"></div>
<div style="left:15.5px;top:513.02px;width:7.5px;height:9.8px;background:linear-gradient(90deg,#1a3cb0 0,#1a3cb0 1px,#3a78fa 1px,#2a64f4 4px,#1a50dc 6px,#1a3cb0 7px);box-shadow:inset 0 -1px 0 #1a3cb0,inset 0 1px 0 #2a50c8;border-radius:0 1px 1px 0"></div>
<div class="t" style="left:27.5px;top:513.11px;font-size:8.55px;line-height:10px;color:#05080e">Paramétrages</div>
<div style="left:7px;top:529.15px;width:8.5px;height:1px;background:repeating-linear-gradient(90deg,#92a3bb 0 3px,transparent 3px 4px)"></div>
<div style="left:4.5px;top:527.15px;width:4px;height:4px;border:1px solid #b4bcc6;border-radius:1.5px;background:linear-gradient(#fff,#e4e8ee)"></div>
<div style="left:6.0px;top:529.15px;width:3px;height:1px;background:#6a6a6a"></div>
<div style="left:7.0px;top:528.15px;width:1px;height:3px;background:#6a6a6a"></div>
<div style="left:15.5px;top:524.65px;width:7.5px;height:9.8px;background:linear-gradient(90deg,#1a3cb0 0,#1a3cb0 1px,#3a78fa 1px,#2a64f4 4px,#1a50dc 6px,#1a3cb0 7px);box-shadow:inset 0 -1px 0 #1a3cb0,inset 0 1px 0 #2a50c8;border-radius:0 1px 1px 0"></div>
<div class="t" style="left:27.5px;top:524.74px;font-size:8.55px;line-height:10px;color:#05080e">Applications spécifiques</div>
<div style="left:7px;top:540.78px;width:8.5px;height:1px;background:repeating-linear-gradient(90deg,#92a3bb 0 3px,transparent 3px 4px)"></div>
<div style="left:4.5px;top:538.78px;width:4px;height:4px;border:1px solid #b4bcc6;border-radius:1.5px;background:linear-gradient(#fff,#e4e8ee)"></div>
<div style="left:6.0px;top:540.78px;width:3px;height:1px;background:#6a6a6a"></div>
<div style="left:7.0px;top:539.78px;width:1px;height:3px;background:#6a6a6a"></div>
<div style="left:15.5px;top:536.28px;width:7.5px;height:9.8px;background:linear-gradient(90deg,#1a3cb0 0,#1a3cb0 1px,#3a78fa 1px,#2a64f4 4px,#1a50dc 6px,#1a3cb0 7px);box-shadow:inset 0 -1px 0 #1a3cb0,inset 0 1px 0 #2a50c8;border-radius:0 1px 1px 0"></div>
<div class="t" style="left:27.5px;top:536.37px;font-size:8.55px;line-height:10px;color:#05080e">Add-on</div>
<div style="left:7px;top:552.41px;width:8.5px;height:1px;background:repeating-linear-gradient(90deg,#92a3bb 0 3px,transparent 3px 4px)"></div>
<div style="left:4.5px;top:550.41px;width:4px;height:4px;border:1px solid #b4bcc6;border-radius:1.5px;background:linear-gradient(#fff,#e4e8ee)"></div>
<div style="left:6.0px;top:552.41px;width:3px;height:1px;background:#6a6a6a"></div>
<div style="left:7.0px;top:551.41px;width:1px;height:3px;background:#6a6a6a"></div>
<div style="left:15.5px;top:547.91px;width:7.5px;height:9.8px;background:linear-gradient(90deg,#1a3cb0 0,#1a3cb0 1px,#3a78fa 1px,#2a64f4 4px,#1a50dc 6px,#1a3cb0 7px);box-shadow:inset 0 -1px 0 #1a3cb0,inset 0 1px 0 #2a50c8;border-radius:0 1px 1px 0"></div>
<div class="t" style="left:27.5px;top:548.00px;font-size:8.55px;line-height:10px;color:#05080e">Outils</div>
</div>
<div style="left:174px;top:63px;width:12px;height:549px;background:#f0f0f0"></div>
<div style="left:174.5px;top:86px;width:11px;height:493px;background:#cdcdcd"></div>
<div style="left:15px;top:612px;width:171px;height:11px;background:#f0f0f0"></div>
<div style="left:26px;top:613px;width:119px;height:10px;background:#cdcdcd"></div>
<svg style="position:absolute;left:0;top:0" width="200" height="634" viewBox="0 0 200 634"><path d="M178 70 L180 68 L182 70" stroke="#333" stroke-width="1.2" fill="none"/><path d="M177.8 604.5 L180 606.7 L182.2 604.5" stroke="#333" stroke-width="1.4" fill="none"/><path d="M21.8 615 L19.6 617.5 L21.8 620" stroke="#333" stroke-width="1.4" fill="none"/><path d="M167.2 615 L169.4 617.5 L167.2 620" stroke="#333" stroke-width="1.4" fill="none"/></svg>
<svg style="position:absolute;left:0;top:0" width="620" height="86" viewBox="0 0 620 86"><defs><linearGradient id="bk" x1="0" x2="1" y1="0" y2="0"><stop offset="0" stop-color="#2f55c8"/><stop offset="0.75" stop-color="#c4d4fa"/><stop offset="0.78" stop-color="#1a3aa8"/><stop offset="1" stop-color="#2a50c0"/></linearGradient><linearGradient id="pb" x1="0" x2="0" y1="0" y2="1"><stop offset="0" stop-color="#1c64d0"/><stop offset="1" stop-color="#3a8ae8"/></linearGradient></defs><path d="M234 66 L254.5 67.5 L254.5 84 L234 84Z" fill="url(#bk)"/><path d="M234 66 L254.5 67.5 L254.5 69 L251 70 L251 72 L234 68Z" fill="#0c2a8a"/><circle cx="238.5" cy="82" r="5.2" fill="#e0cc50"/><circle cx="238.5" cy="82" r="2.4" fill="#fff8c8"/><path d="M232 84 h13" stroke="#d8c040" stroke-width="2"/><path d="M326 65 L339.5 65.5 L338.5 75 L323.5 75Z" fill="#e4f2fc"/><path d="M314 84 Q314 74.5 322 74 L338 74 Q342 74.5 342 79 L342 84Z" fill="#f2f4f6"/><path d="M316.5 84 Q316.5 76.5 323 76 L335.5 76 Q333.5 77 333.5 80 L333.5 84Z" fill="url(#pb)"/><path d="M335 77 Q340 76.5 341 79 L341 84 L334.5 84 Q334 78 335 77Z" fill="#d4d2cc"/><path d="M409.5 65 L423.0 65.5 L422.0 75 L407.0 75Z" fill="#e4f2fc"/><path d="M397.5 84 Q397.5 74.5 405.5 74 L421.5 74 Q425.5 74.5 425.5 79 L425.5 84Z" fill="#f2f4f6"/><path d="M400.0 84 Q400.0 76.5 406.5 76 L419.0 76 Q417.0 77 417.0 80 L417.0 84Z" fill="url(#pb)"/><path d="M418.5 77 Q423.5 76.5 424.5 79 L424.5 84 L418.0 84 Q417.5 78 418.5 77Z" fill="#d4d2cc"/><path d="M485.5 66 L506.0 67.5 L506.0 84 L485.5 84Z" fill="url(#bk)"/><path d="M485.5 66 L506.0 67.5 L506.0 69 L502.5 70 L502.5 72 L485.5 68Z" fill="#0c2a8a"/><path d="M569 66 L589.5 67.5 L589.5 84 L569 84Z" fill="url(#bk)"/><path d="M569 66 L589.5 67.5 L589.5 69 L586 70 L586 72 L569 68Z" fill="#0c2a8a"/></svg>
<div style="left:123px;top:84px;width:695px;height:366.5px;background:linear-gradient(#bccad8,#d9e3ed 19px,#d9e4ef 20px);border:1px solid #8795a5;border-radius:4px 4px 0 0;box-sizing:border-box"></div>
<div style="left:128px;top:104px;width:685px;height:4px;background:#3c64cc"></div>
<div style="left:128px;top:108px;width:685px;height:338.5px;background:#f0f0f0"></div>
<div style="left:1127.0px;top:40.4px;width:20.3px;height:12.100000000000001px;background:linear-gradient(#d8e2ed,#cbd7e4);border:1px solid #a9b6c6;border-radius:2.5px;box-sizing:border-box"></div>
<div style="left:1149.1px;top:40.4px;width:20.3px;height:12.100000000000001px;background:linear-gradient(#d8e2ed,#cbd7e4);border:1px solid #a9b6c6;border-radius:2.5px;box-sizing:border-box"></div>
<div style="left:1171.2px;top:40.4px;width:20.3px;height:12.100000000000001px;background:linear-gradient(#d8e2ed,#cbd7e4);border:1px solid #a9b6c6;border-radius:2.5px;box-sizing:border-box"></div>
<svg style="position:absolute;left:1127px;top:40.4px" width="64.5" height="12.100000000000001" viewBox="0 0 64.5 12.100000000000001"><rect x="6.550000000000001" y="6.250000000000001" width="7.2" height="2.4" rx="0.8" fill="#fff" stroke="#6e6e6e" stroke-width="0.9"/><rect x="28.95" y="3.3500000000000005" width="6.6" height="5" rx="0.8" fill="#fff" stroke="#6e6e6e" stroke-width="0.9"/><rect x="28.95" y="3.3500000000000005" width="6.6" height="1.4" fill="#6e6e6e"/><path d="M51.15 3.4500000000000006 L57.550000000000004 8.65 M57.550000000000004 3.4500000000000006 L51.15 8.65" stroke="#6e6e6e" stroke-width="2.6"/><path d="M51.15 3.4500000000000006 L57.550000000000004 8.65 M57.550000000000004 3.4500000000000006 L51.15 8.65" stroke="#fff" stroke-width="1.3"/></svg>
<div style="left:129px;top:91px;width:10.5px;height:10.5px;background:#f0641e;border-radius:2px"></div>
<div style="left:134px;top:92.5px;width:1px;height:7.5px;background:#ffe2c8"></div>
<div style="left:134px;top:94px;width:2.5px;height:0.8px;background:#ffe2c8"></div>
<div style="left:134px;top:96px;width:2.5px;height:0.8px;background:#ffe2c8"></div>
<div style="left:134px;top:98px;width:2.5px;height:0.8px;background:#ffe2c8"></div>
<div class="t" style="left:142.5px;top:92.72px;font-size:7.45px;line-height:10px;color:#a6aab0">Suivi des NC ou des Interventions (Q004)</div>
<div style="left:747px;top:91px;width:20px;height:11px;background:linear-gradient(#d8e2ed,#cbd7e4);border:1px solid #a9b6c6;border-radius:2.5px;box-sizing:border-box"></div>
<div style="left:769px;top:91px;width:20px;height:11px;background:linear-gradient(#d8e2ed,#cbd7e4);border:1px solid #a9b6c6;border-radius:2.5px;box-sizing:border-box"></div>
<div style="left:791px;top:91px;width:20px;height:11px;background:linear-gradient(#d8e2ed,#cbd7e4);border:1px solid #a9b6c6;border-radius:2.5px;box-sizing:border-box"></div>
<svg style="position:absolute;left:747px;top:91px" width="64" height="11" viewBox="0 0 64 11"><rect x="6.4" y="5.7" width="7.2" height="2.4" rx="0.8" fill="#fff" stroke="#6e6e6e" stroke-width="0.9"/><rect x="28.7" y="2.8" width="6.6" height="5" rx="0.8" fill="#fff" stroke="#6e6e6e" stroke-width="0.9"/><rect x="28.7" y="2.8" width="6.6" height="1.4" fill="#6e6e6e"/><path d="M50.8 2.9 L57.2 8.1 M57.2 2.9 L50.8 8.1" stroke="#6e6e6e" stroke-width="2.6"/><path d="M50.8 2.9 L57.2 8.1 M57.2 2.9 L50.8 8.1" stroke="#fff" stroke-width="1.3"/></svg>
<div style="left:128px;top:108px;width:685px;height:2px;background:#eef3f8"></div>
<div style="left:357px;top:110px;width:224.5px;height:17px;background:#efefef;border:1px solid #dadada;border-bottom:none;box-sizing:border-box"></div>
<div style="left:581px;top:110px;width:226px;height:17px;background:#efefef;border:1px solid #dadada;border-bottom:none;box-sizing:border-box"></div>
<div style="left:357px;top:126px;width:451px;height:1px;background:#dadada"></div>
<div style="left:131px;top:109.5px;width:226.5px;height:17.5px;background:#fff"></div>
<div class="t" style="left:182px;top:113.37px;font-size:8.45px;line-height:10px;font-weight:bold;color:#111">NC ou suivi d'Interventions</div>
<svg style="position:absolute;left:297px;top:112px" width="11" height="10" viewBox="0 0 11 10"><circle cx="5.5" cy="6" r="3.6" fill="#111"/><circle cx="4.5" cy="5" r="1" fill="#888"/><path d="M7 3 L8.5 1.2" stroke="#c8a040" stroke-width="1"/><circle cx="9" cy="1" r="0.9" fill="#f0c030"/></svg>
<div class="t" style="left:452px;top:113.79px;font-size:8.4px;line-height:10px;color:#1a1a1a">Liste</div>
<div style="left:477px;top:114.5px;width:10px;height:8px;background:repeating-linear-gradient(#cfd3d8 0 1px,#f4f4f4 1px 2px);border:1px solid #c9cdd2;box-sizing:border-box"></div>
<div class="t" style="left:665.5px;top:113.79px;font-size:8.4px;line-height:10px;color:#1a1a1a">Statistiques</div>
<svg style="position:absolute;left:715px;top:113.5px" width="10" height="9" viewBox="0 0 10 9"><rect x="0.5" y="0.5" width="9" height="8" fill="#fff" stroke="#b02020"/><path d="M1.5 7 L4 4 L6 5.5 L8.5 2" stroke="#c02020" stroke-width="1.2" fill="none"/></svg>
<div style="left:131px;top:127px;width:678px;height:299.5px;background:#f0f0f0;border:1px solid #dcdcdc;border-top:none;box-sizing:border-box"></div>
<div style="left:131px;top:127px;width:2px;height:299.5px;background:#f8f8f8"></div>
<div class="t" style="left:144px;top:131.58px;font-size:8px;line-height:10px;color:#1a1a1a;">N°</div>
<div style="left:174px;top:130px;width:60.5px;height:11.5px;background:#ebebeb;border:1px solid #b6b6b6;box-sizing:border-box;"></div>
<div class="t" style="left:174px;top:131.58px;font-size:8px;line-height:10px;width:60.5px;text-align:center;color:#222">NC202000221</div>
<div class="t" style="left:239.5px;top:131.58px;font-size:8px;line-height:10px;color:#1a1a1a;">Clé</div>
<div style="left:254.5px;top:130px;width:32.0px;height:11.5px;background:#ebebeb;border:1px solid #b6b6b6;box-sizing:border-box;"></div>
<div class="t" style="left:254.5px;top:131.58px;font-size:8px;line-height:10px;width:32.0px;text-align:center;color:#222">5124</div>
<div class="t" style="left:293.5px;top:131.58px;font-size:8px;line-height:10px;color:#1a1a1a;">Statut</div>
<div style="left:316.5px;top:130px;width:53px;height:11.5px;background:#0c8a12;border:1px solid #0a6e0e;box-sizing:border-box"></div>
<div class="t" style="left:316.5px;top:131.73px;font-size:8px;line-height:10px;width:53px;text-align:center;color:#d8f5d0">En cours</div>
<div class="t" style="left:374px;top:131.58px;font-size:8px;line-height:10px;color:#1a1a1a;">Emetteur</div>
<div style="left:419.5px;top:130px;width:31.5px;height:11.5px;background:#fff;border:1px solid #bababa;box-sizing:border-box;"></div>
<div class="t" style="left:419.5px;top:131.58px;font-size:8px;line-height:10px;width:31.5px;text-align:center;color:#222">9007</div>
<div style="left:454.5px;top:131px;width:10.5px;height:10.5px;background:linear-gradient(#f2f2f2,#e2e2e2);border:1px solid #c2c2c2;box-sizing:border-box"></div>
<div class="t" style="left:454.5px;top:131.83px;font-size:8px;line-height:10px;width:10.5px;text-align:center;color:#333;letter-spacing:-0.2px">...</div>
<div style="left:469px;top:130px;width:128.5px;height:11.5px;background:#ebebeb;border:1px solid #b6b6b6;box-sizing:border-box;"></div>
<div class="t" style="left:471px;top:131.58px;font-size:8px;line-height:10px;color:#222">MOURER Francis</div>
<div style="left:138px;top:148.5px;width:463px;height:69.30000000000001px;border:1px solid #dadada;box-shadow:inset 1px 1px 0 #fafafa,1px 1px 0 #fafafa;border-radius:2px;box-sizing:border-box"></div>
<div class="t" style="left:143px;top:143.2px;font-size:7.2px;line-height:10px;font-style:italic;color:#222;background:#f0f0f0;padding:0 2px">Analyse ...</div>
<div class="t" style="left:144px;top:157.33px;font-size:8px;line-height:10px;color:#1a1a1a;">Libellé</div>
<div style="left:174px;top:155.5px;width:190px;height:58.5px;background:#fff;border:1px solid #bababa;box-sizing:border-box"></div>
<div class="t" style="left:175px;top:157.03px;font-size:8px;line-height:10px;color:#1a1a1a">La zone de rainurage est positionnée mais il n'y a</div>
<div class="t" style="left:175px;top:167.03px;font-size:8px;line-height:10px;color:#1a1a1a">pas de rainurage sur les circuits nous ne pouvons</div>
<div class="t" style="left:175px;top:177.03px;font-size:8px;line-height:10px;color:#1a1a1a">pas dégrapper les cartes qui sont câblées.</div>
<div class="t" style="left:175px;top:187.03px;font-size:8px;line-height:10px;color:#1a1a1a">cf photo en pj</div>
<svg style="position:absolute;left:170.0px;top:207.5px" width="11" height="10" viewBox="0 0 11 10"><line x1="1" y1="9" x2="4" y2="6" stroke="#6a7f9c" stroke-width="1.3"/><circle cx="6.5" cy="3.5" r="2.7" fill="#e8f0ff" stroke="#4d6fc4" stroke-width="1"/><path d="M5 3.5h3M6.5 2v3" stroke="#4d6fc4" stroke-width="0.7"/></svg>
<div class="t" style="left:374px;top:157.43px;font-size:8px;line-height:10px;color:#1a1a1a;">Cause</div>
<div style="left:419.5px;top:156.2px;width:177.5px;height:10.800000000000011px;background:#fff;border:1px solid #bababa;box-sizing:border-box;"></div>
<div class="t" style="left:419.5px;top:157.43px;font-size:8px;line-height:10px;width:177.5px;text-align:center;color:#222">Non Conformité Fournisseur</div>
<div class="t" style="left:374px;top:172.83px;font-size:8px;line-height:10px;color:#1a1a1a;">Famille</div>
<div style="left:419.5px;top:171.5px;width:31.5px;height:11.0px;background:#fff;border:1px solid #bababa;box-sizing:border-box;"></div>
<div class="t" style="left:419.5px;top:172.83px;font-size:8px;line-height:10px;width:31.5px;text-align:center;color:#222">07</div>
<div style="left:454.5px;top:172px;width:10.5px;height:10.5px;background:linear-gradient(#f2f2f2,#e2e2e2);border:1px solid #c2c2c2;box-sizing:border-box"></div>
<div class="t" style="left:454.5px;top:172.83px;font-size:8px;line-height:10px;width:10.5px;text-align:center;color:#333;letter-spacing:-0.2px">...</div>
<div style="left:469px;top:171.5px;width:128px;height:11.0px;background:#ebebeb;border:1px solid #b6b6b6;box-sizing:border-box;"></div>
<div class="t" style="left:471px;top:172.83px;font-size:8px;line-height:10px;color:#222">CIMP</div>
<div class="t" style="left:374px;top:188.33px;font-size:8px;line-height:10px;color:#1a1a1a;">S/Fam.</div>
<div style="left:419.5px;top:187px;width:31.5px;height:11px;background:#fff;border:1px solid #bababa;box-sizing:border-box;"></div>
<div class="t" style="left:419.5px;top:188.33px;font-size:8px;line-height:10px;width:31.5px;text-align:center;color:#222">01</div>
<div style="left:469px;top:187px;width:128px;height:11px;background:#ebebeb;border:1px solid #b6b6b6;box-sizing:border-box;"></div>
<div class="t" style="left:471px;top:188.33px;font-size:8px;line-height:10px;color:#222">Bords</div>
<div class="t" style="left:374px;top:203.83px;font-size:8px;line-height:10px;color:#1a1a1a;">Niveau</div>
<div style="left:419.5px;top:202.5px;width:177.5px;height:11.0px;background:#fff;border:1px solid #bababa;box-sizing:border-box;"></div>
<div class="t" style="left:440.5px;top:204.03px;font-size:8px;line-height:10px;color:#222">A retoucher</div>
<div class="t" style="left:144px;top:226.83px;font-size:8px;line-height:10px;color:#1a1a1a;">Causes</div>
<div class="t" style="left:144px;top:237.83px;font-size:8px;line-height:10px;color:#1a1a1a;">racine</div>
<div style="left:174.5px;top:225px;width:189.5px;height:42.5px;background:#fff;border:1px solid #bababa;box-sizing:border-box"></div>
<svg style="position:absolute;left:170.0px;top:261.5px" width="11" height="10" viewBox="0 0 11 10"><line x1="1" y1="9" x2="4" y2="6" stroke="#6a7f9c" stroke-width="1.3"/><circle cx="6.5" cy="3.5" r="2.7" fill="#e8f0ff" stroke="#4d6fc4" stroke-width="1"/><path d="M5 3.5h3M6.5 2v3" stroke="#4d6fc4" stroke-width="0.7"/></svg>
<div class="t" style="left:374px;top:226.83px;font-size:8px;line-height:10px;color:#1a1a1a;">Produit</div>
<div style="left:419.5px;top:225.5px;width:65.0px;height:11.0px;background:#fff;border:1px solid #bababa;box-sizing:border-box;"></div>
<div class="t" style="left:421.5px;top:226.83px;font-size:8px;line-height:10px;color:#222">W200807_B</div>
<div class="t" style="left:374px;top:242.53px;font-size:8px;line-height:10px;color:#1a1a1a;">Désignat.</div>
<div style="left:419.5px;top:241.2px;width:180.5px;height:11.0px;background:#ebebeb;border:1px solid #b6b6b6;box-sizing:border-box;"></div>
<div class="t" style="left:421.5px;top:242.53px;font-size:8px;line-height:10px;color:#222">C.IMP. Multi-Couches</div>
<div class="t" style="left:374px;top:258.23px;font-size:8px;line-height:10px;color:#1a1a1a;">Qté</div>
<div style="left:419.5px;top:256.8px;width:55.0px;height:11.199999999999989px;background:#fff;border:1px solid #bababa;box-sizing:border-box;"></div>
<div class="t" style="left:419.5px;top:258.23px;font-size:8px;line-height:10px;width:53.0px;text-align:right;color:#222">15,000</div>
<div class="t" style="left:477px;top:258.23px;font-size:8px;line-height:10px;color:#1a1a1a">UN</div>
<div style="left:138px;top:275.5px;width:463px;height:97.30000000000001px;border:1px solid #dadada;box-shadow:inset 1px 1px 0 #fafafa,1px 1px 0 #fafafa;border-radius:2px;box-sizing:border-box"></div>
<div class="t" style="left:143px;top:270.2px;font-size:7.2px;line-height:10px;font-style:italic;color:#222;background:#f0f0f0;padding:0 2px">Origine ...</div>
<div class="t" style="left:144px;top:281.23px;font-size:8px;line-height:10px;color:#1a1a1a;">Origine</div>
<div style="left:207px;top:279.8px;width:109px;height:11.199999999999989px;background:#ebebeb;border:1px solid #b6b6b6;box-sizing:border-box;"></div>
<div class="t" style="left:207px;top:281.23px;font-size:8px;line-height:10px;width:109px;text-align:center;color:#111;font-weight:bold">Réceptions</div>
<div class="t" style="left:144px;top:296.63px;font-size:8px;line-height:10px;color:#1a1a1a;">OF/N° série</div>
<div style="left:207px;top:295.2px;width:63.5px;height:11.199999999999989px;background:#ebebeb;border:1px solid #b6b6b6;box-sizing:border-box;"></div>
<div style="left:275.3px;top:295.2px;width:40.69999999999999px;height:11.199999999999989px;background:#ebebeb;border:1px solid #b6b6b6;box-sizing:border-box;"></div>
<div class="t" style="left:144px;top:312.43px;font-size:8px;line-height:10px;color:#1a1a1a;">Réclamation n°</div>
<div style="left:207px;top:311px;width:109px;height:11.199999999999989px;background:#fff;border:1px solid #bababa;box-sizing:border-box;"></div>
<div class="t" style="left:144px;top:328.23px;font-size:8px;line-height:10px;color:#1a1a1a;">N° BL/Id/Retour</div>
<div style="left:207px;top:326.8px;width:63.5px;height:11.199999999999989px;background:#ebebeb;border:1px solid #b6b6b6;box-sizing:border-box;"></div>
<div style="left:275.3px;top:326.8px;width:21.69999999999999px;height:11.199999999999989px;background:#ebebeb;border:1px solid #b6b6b6;box-sizing:border-box;"></div>
<div style="left:301px;top:326.8px;width:15px;height:11.199999999999989px;background:#ebebeb;border:1px solid #b6b6b6;box-sizing:border-box;"></div>
<div class="t" style="left:144px;top:343.63px;font-size:8px;line-height:10px;color:#1a1a1a;">Cmde/Id/Recept</div>
<div style="left:207px;top:342.2px;width:63.5px;height:11.199999999999989px;background:#ebebeb;border:1px solid #b6b6b6;box-sizing:border-box;"></div>
<div class="t" style="left:207px;top:343.63px;font-size:8px;line-height:10px;width:63.5px;text-align:center;color:#222">A202001005</div>
<div style="left:275.3px;top:342.2px;width:21.69999999999999px;height:11.199999999999989px;background:#ebebeb;border:1px solid #b6b6b6;box-sizing:border-box;"></div>
<div class="t" style="left:275.3px;top:343.63px;font-size:8px;line-height:10px;width:21.69999999999999px;text-align:center;color:#222">001</div>
<div style="left:301px;top:342.2px;width:15px;height:11.199999999999989px;background:#ebebeb;border:1px solid #b6b6b6;box-sizing:border-box;"></div>
<div class="t" style="left:301px;top:343.63px;font-size:8px;line-height:10px;width:15px;text-align:center;color:#222">1</div>
<div class="t" style="left:144px;top:359.03px;font-size:8px;line-height:10px;color:#1a1a1a;">N° OI</div>
<div style="left:207px;top:357.6px;width:63.5px;height:11.199999999999989px;background:#ebebeb;border:1px solid #b6b6b6;box-sizing:border-box;"></div>
<div class="t" style="left:324.5px;top:281.23px;font-size:8px;line-height:10px;color:#1a1a1a;">At/Ce</div>
<div style="left:373px;top:279.8px;width:33px;height:11.199999999999989px;background:#ebebeb;border:1px solid #b6b6b6;box-sizing:border-box;"></div>
<div style="left:419px;top:279.8px;width:181px;height:11.199999999999989px;background:#ebebeb;border:1px solid #b6b6b6;box-sizing:border-box;"></div>
<div class="t" style="left:324.5px;top:296.63px;font-size:8px;line-height:10px;color:#1a1a1a;">Opérateur</div>
<div style="left:373px;top:295.2px;width:33px;height:11.199999999999989px;background:#ebebeb;border:1px solid #b6b6b6;box-sizing:border-box;"></div>
<div style="left:419px;top:295.2px;width:181px;height:11.199999999999989px;background:#ebebeb;border:1px solid #b6b6b6;box-sizing:border-box;"></div>
<div class="t" style="left:324.5px;top:312.43px;font-size:8px;line-height:10px;color:#1a1a1a;">Client</div>
<div style="left:373px;top:311px;width:33px;height:11.199999999999989px;background:#ebebeb;border:1px solid #b6b6b6;box-sizing:border-box;"></div>
<div style="left:419px;top:311px;width:181px;height:11.199999999999989px;background:#ebebeb;border:1px solid #b6b6b6;box-sizing:border-box;"></div>
<div class="t" style="left:324.5px;top:328.23px;font-size:8px;line-height:10px;color:#1a1a1a;">Interlocuteur</div>
<div style="left:373px;top:326.8px;width:33px;height:11.199999999999989px;background:#ebebeb;border:1px solid #b6b6b6;box-sizing:border-box;"></div>
<div style="left:419px;top:326.8px;width:181px;height:11.199999999999989px;background:#ebebeb;border:1px solid #b6b6b6;box-sizing:border-box;"></div>
<div class="t" style="left:324.5px;top:343.63px;font-size:8px;line-height:10px;color:#1a1a1a;">Fournisseur</div>
<div style="left:373px;top:342.2px;width:33px;height:11.199999999999989px;background:#ebebeb;border:1px solid #b6b6b6;box-sizing:border-box;"></div>
<div class="t" style="left:373px;top:343.63px;font-size:8px;line-height:10px;width:33px;text-align:center;color:#222">0920</div>
<div style="left:419px;top:342.2px;width:181px;height:11.199999999999989px;background:#ebebeb;border:1px solid #b6b6b6;box-sizing:border-box;"></div>
<div class="t" style="left:421px;top:343.63px;font-size:8px;line-height:10px;color:#222">SAFE-PCB FRANCE</div>
<div class="t" style="left:324.5px;top:359.03px;font-size:8px;line-height:10px;color:#1a1a1a;">Interlocuteur</div>
<div style="left:373px;top:357.6px;width:33px;height:11.199999999999989px;background:#ebebeb;border:1px solid #b6b6b6;box-sizing:border-box;"></div>
<div style="left:419px;top:357.6px;width:181px;height:11.199999999999989px;background:#ebebeb;border:1px solid #b6b6b6;box-sizing:border-box;"></div>
<div class="t" style="left:144px;top:382.33px;font-size:8px;line-height:10px;color:#1a1a1a;">Com.</div>
<div style="left:174.5px;top:380.5px;width:640px;height:40.5px;background:#fff;border:1px solid #bababa;box-sizing:border-box"></div>
<svg style="position:absolute;left:170.0px;top:415px" width="11" height="10" viewBox="0 0 11 10"><line x1="1" y1="9" x2="4" y2="6" stroke="#6a7f9c" stroke-width="1.3"/><circle cx="6.5" cy="3.5" r="2.7" fill="#e8f0ff" stroke="#4d6fc4" stroke-width="1"/><path d="M5 3.5h3M6.5 2v3" stroke="#4d6fc4" stroke-width="0.7"/></svg>
<div style="left:134px;top:430.3px;width:84px;height:13.199999999999989px;background:linear-gradient(#ececec,#e2e2e2);border:1px solid #bdbdbd;border-radius:1px;box-sizing:border-box"></div>
<div class="t" style="left:134px;top:431.95px;font-size:8.5px;line-height:10px;width:84px;text-align:center;color:#1a1a1a">Histo mvts stock</div>
<div style="left:222.3px;top:430.3px;width:83.5px;height:13.199999999999989px;background:linear-gradient(#ececec,#e2e2e2);border:1px solid #bdbdbd;border-radius:1px;box-sizing:border-box"></div>
<div class="t" style="left:222.3px;top:431.95px;font-size:8.5px;line-height:10px;width:83.5px;text-align:center;color:#1a1a1a">Histo temps passés</div>
<div style="left:343.5px;top:430.3px;width:84.19999999999999px;height:13.199999999999989px;background:linear-gradient(#ececec,#e2e2e2);border:1px solid #bdbdbd;border-radius:1px;box-sizing:border-box"></div>
<div class="t" style="left:343.5px;top:431.95px;font-size:8.5px;line-height:10px;width:84.19999999999999px;text-align:center;color:#1a1a1a">Mvts stock</div>
<div style="left:431.5px;top:430.3px;width:84.20000000000005px;height:13.199999999999989px;background:linear-gradient(#ececec,#e2e2e2);border:1px solid #bdbdbd;border-radius:1px;box-sizing:border-box"></div>
<div class="t" style="left:431.5px;top:431.95px;font-size:8.5px;line-height:10px;width:84.20000000000005px;text-align:center;color:#1a1a1a">Actions</div>
<div style="left:487px;top:160.5px;width:513px;height:449px;background:linear-gradient(#bccad8,#d9e3ed 19px,#d9e4ef 20px);border:1px solid #8795a5;border-radius:4px 4px 0 0;box-sizing:border-box"></div>
<div style="left:493px;top:180px;width:501.5px;height:4px;background:#3c64cc"></div>
<div style="left:492.5px;top:184px;width:502.5px;height:422px;background:#f0f0f0"></div>
<div style="left:494px;top:167.3px;width:10.5px;height:10.5px;background:#f0641e;border-radius:2px"></div>
<div style="left:499px;top:168.8px;width:1px;height:7.5px;background:#ffe2c8"></div>
<div style="left:499px;top:170.3px;width:2.5px;height:0.8px;background:#ffe2c8"></div>
<div style="left:499px;top:172.3px;width:2.5px;height:0.8px;background:#ffe2c8"></div>
<div style="left:499px;top:174.3px;width:2.5px;height:0.8px;background:#ffe2c8"></div>
<div class="t" style="left:507px;top:169.12px;font-size:7.45px;line-height:10px;color:#a6aab0">Actions de la NC (Q023)</div>
<div style="left:928.5px;top:166.6px;width:20px;height:11.800000000000011px;background:linear-gradient(#d8e2ed,#cbd7e4);border:1px solid #a9b6c6;border-radius:2.5px;box-sizing:border-box"></div>
<div style="left:950.5px;top:166.6px;width:20px;height:11.800000000000011px;background:linear-gradient(#d8e2ed,#cbd7e4);border:1px solid #a9b6c6;border-radius:2.5px;box-sizing:border-box"></div>
<div style="left:972.5px;top:166.6px;width:20px;height:11.800000000000011px;background:linear-gradient(#d8e2ed,#cbd7e4);border:1px solid #a9b6c6;border-radius:2.5px;box-sizing:border-box"></div>
<svg style="position:absolute;left:928.5px;top:166.6px" width="64" height="11.800000000000011" viewBox="0 0 64 11.800000000000011"><rect x="6.4" y="6.100000000000006" width="7.2" height="2.4" rx="0.8" fill="#fff" stroke="#6e6e6e" stroke-width="0.9"/><rect x="28.7" y="3.2000000000000055" width="6.6" height="5" rx="0.8" fill="#fff" stroke="#6e6e6e" stroke-width="0.9"/><rect x="28.7" y="3.2000000000000055" width="6.6" height="1.4" fill="#6e6e6e"/><path d="M50.8 3.3000000000000056 L57.2 8.500000000000005 M57.2 3.3000000000000056 L50.8 8.500000000000005" stroke="#6e6e6e" stroke-width="2.6"/><path d="M50.8 3.3000000000000056 L57.2 8.500000000000005 M57.2 3.3000000000000056 L50.8 8.500000000000005" stroke="#fff" stroke-width="1.3"/></svg>
<div class="t" style="left:498px;top:189.83px;font-size:8px;line-height:10px;color:#1a1a1a;">N°</div>
<div style="left:513px;top:188.3px;width:60.5px;height:11.199999999999989px;background:#ebebeb;border:1px solid #b6b6b6;box-sizing:border-box;"></div>
<div class="t" style="left:513.8px;top:189.73px;font-size:8px;line-height:10px;color:#222">NC202000221</div>
<div class="t" style="left:593.5px;top:189.83px;font-size:8px;line-height:10px;color:#1a1a1a;">Statut</div>
<div style="left:621.7px;top:188.5px;width:60px;height:11px;background:#0c8a12;border:1px solid #0a6e0e;box-sizing:border-box"></div>
<div class="t" style="left:621.7px;top:189.93px;font-size:8px;line-height:10px;width:60px;text-align:center;color:#d8f5d0">En cours</div>
<div class="t" style="left:707.8px;top:189.83px;font-size:8px;line-height:10px;color:#1a1a1a;">Emetteur</div>
<div style="left:748px;top:188.3px;width:128.70000000000005px;height:11.199999999999989px;background:#ebebeb;border:1px solid #b6b6b6;box-sizing:border-box;"></div>
<div class="t" style="left:748.8px;top:189.73px;font-size:8px;line-height:10px;color:#222">MOURER Francis</div>
<div style="left:935.5px;top:186px;width:14px;height:14px;background:linear-gradient(#f6f6f6,#e6e6e6);border:1px solid #c8c8c8;box-sizing:border-box"></div>
<div style="left:951px;top:186px;width:14px;height:14px;background:linear-gradient(#f6f6f6,#e6e6e6);border:1px solid #c8c8c8;box-sizing:border-box"></div>
<div style="left:969.3px;top:186px;width:14px;height:14px;background:linear-gradient(#f6f6f6,#e6e6e6);border:1px solid #c8c8c8;box-sizing:border-box"></div>
<svg style="position:absolute;left:938.5px;top:189px" width="8" height="8" viewBox="0 0 8 8"><path d="M6 0.5 L1.5 4 L6 7.5Z" fill="#3d8ee0"/></svg>
<svg style="position:absolute;left:972.5px;top:189px" width="8" height="8" viewBox="0 0 8 8"><path d="M2 0.5 L6.5 4 L2 7.5Z" fill="#3d8ee0"/></svg>
<svg style="position:absolute;left:953px;top:188px" width="10" height="10" viewBox="0 0 10 10"><circle cx="5" cy="5" r="4.3" fill="#5aa0e0"/><path d="M2.5 3 L5 5.5 L5 3 M5 7 L7.5 7.5 L7 5" stroke="#fff" stroke-width="1.1" fill="none"/></svg>
<div style="left:744.5px;top:205px;width:246px;height:16px;background:#efefef;border:1px solid #dadada;border-bottom:none;box-sizing:border-box"></div>
<div style="left:744.5px;top:220px;width:246px;height:1px;background:#dadada"></div>
<div style="left:495.5px;top:203.5px;width:249px;height:18.5px;background:#fff"></div>
<div class="t" style="left:586.4px;top:207.77px;font-size:8.45px;line-height:10px;font-weight:bold;color:#111">Actions de la NC</div>
<div class="t" style="left:848.5px;top:209.29px;font-size:8.4px;line-height:10px;color:#1a1a1a">Liste</div>
<div style="left:873px;top:210px;width:10px;height:8px;background:repeating-linear-gradient(#cfd3d8 0 1px,#f4f4f4 1px 2px);border:1px solid #c9cdd2;box-sizing:border-box"></div>
<div style="left:495.5px;top:222px;width:495px;height:378px;background:#f0f0f0;border:1px solid #dcdcdc;border-top:none;box-sizing:border-box"></div>
<div style="left:495.5px;top:222px;width:2.5px;height:378px;background:#f8f8f8"></div>
<div style="left:500.3px;top:230px;width:483.7px;height:152px;border:1px solid #dadada;box-shadow:inset 1px 1px 0 #fafafa,1px 1px 0 #fafafa;border-radius:2px;box-sizing:border-box"></div>
<div class="t" style="left:505px;top:224.7px;font-size:7.2px;line-height:10px;font-style:italic;color:#222;background:#f0f0f0;padding:0 2px">Objet ...</div>
<div class="t" style="left:505.6px;top:238.88px;font-size:8px;line-height:10px;color:#1a1a1a;">N° action</div>
<div style="left:564.3px;top:237.5px;width:59.0px;height:11.099999999999994px;background:#ebebeb;border:1px solid #b6b6b6;box-sizing:border-box;"></div>
<div class="t" style="left:564.3px;top:238.88px;font-size:8px;line-height:10px;width:59.0px;text-align:center;color:#222">AQ202000276</div>
<div class="t" style="left:629.8px;top:238.88px;font-size:8px;line-height:10px;color:#1a1a1a;">Type action</div>
<div style="left:675.7px;top:237.5px;width:93.89999999999998px;height:11.099999999999994px;background:#fff;border:1px solid #bababa;box-sizing:border-box;"></div>
<div class="t" style="left:675.7px;top:238.88px;font-size:8px;line-height:10px;width:93.89999999999998px;text-align:center;color:#222">Action curative</div>
<div class="t" style="left:777px;top:238.88px;font-size:8px;line-height:10px;color:#1a1a1a;">Statut</div>
<div style="left:802.4px;top:237.5px;width:68.0px;height:11.099999999999994px;background:#fff;border:1px solid #bababa;box-sizing:border-box;"></div>
<div class="t" style="left:802.4px;top:238.88px;font-size:8px;line-height:10px;width:68.0px;text-align:center;color:#222">Clôturée</div>
<div class="t" style="left:877.6px;top:238.88px;font-size:8px;line-height:10px;color:#1a1a1a;">Emise le</div>
<div style="left:918.4px;top:237.3px;width:61.39999999999998px;height:11.899999999999977px;background:#fff;border:1px solid #bababa;box-sizing:border-box"></div>
<div class="t" style="left:918.4px;top:238.78px;font-size:8px;line-height:10px;width:50.39999999999998px;text-align:center;color:#1a1a1a">11/05/2020</div>
<div style="left:968.8px;top:237.3px;width:11px;height:11.899999999999977px;background:linear-gradient(#f0f0f0,#e0e0e0);border:1px solid #c0c0c0;box-sizing:border-box"></div>
<svg style="position:absolute;left:970.8px;top:241.25px" width="7" height="4" viewBox="0 0 7 4"><path d="M0.5 0.5 L3.5 3.2 L6.5 0.5" stroke="#555" stroke-width="0.9" fill="none"/></svg>
<div class="t" style="left:505.6px;top:254.13px;font-size:8px;line-height:10px;color:#1a1a1a;">Libellé</div>
<div style="left:564.3px;top:252.6px;width:415.5px;height:11.500000000000028px;background:#fff;border:1px solid #bababa;box-sizing:border-box;"></div>
<div class="t" style="left:566.3px;top:254.18px;font-size:8px;line-height:10px;color:#222">Prise en charge des cartes câblées</div>
<div class="t" style="left:505.6px;top:269.83px;font-size:8px;line-height:10px;color:#1a1a1a;">Objet action</div>
<div style="left:564.3px;top:268.2px;width:415.5px;height:37.8px;background:#fff;border:1px solid #bababa;box-sizing:border-box"></div>
<div class="t" style="left:565.6px;top:269.73px;font-size:8px;line-height:10px;color:#1a1a1a">Demande prise en charge par SAFE-PCB des cartes câblées pour les passer en machine de découpe</div>
<svg style="position:absolute;left:559.5px;top:299.5px" width="11" height="10" viewBox="0 0 11 10"><line x1="1" y1="9" x2="4" y2="6" stroke="#6a7f9c" stroke-width="1.3"/><circle cx="6.5" cy="3.5" r="2.7" fill="#e8f0ff" stroke="#4d6fc4" stroke-width="1"/><path d="M5 3.5h3M6.5 2v3" stroke="#4d6fc4" stroke-width="0.7"/></svg>
<div class="t" style="left:505.6px;top:311.33px;font-size:8px;line-height:10px;color:#1a1a1a;">Commentaires</div>
<div style="left:564.3px;top:309.4px;width:415.5px;height:37.8px;background:#fff;border:1px solid #bababa;box-sizing:border-box"></div>
<svg style="position:absolute;left:559.5px;top:341.5px" width="11" height="10" viewBox="0 0 11 10"><line x1="1" y1="9" x2="4" y2="6" stroke="#6a7f9c" stroke-width="1.3"/><circle cx="6.5" cy="3.5" r="2.7" fill="#e8f0ff" stroke="#4d6fc4" stroke-width="1"/><path d="M5 3.5h3M6.5 2v3" stroke="#4d6fc4" stroke-width="0.7"/></svg>
<div class="t" style="left:505.6px;top:352.98px;font-size:8px;line-height:10px;color:#1a1a1a;">Emetteur</div>
<div style="left:564.3px;top:351.2px;width:29.0px;height:11.900000000000034px;background:#fff;border:1px solid #bababa;box-sizing:border-box;"></div>
<div class="t" style="left:564.3px;top:352.98px;font-size:8px;line-height:10px;width:29.0px;text-align:center;color:#222">9007</div>
<div style="left:597px;top:351.5px;width:10px;height:11.600000000000023px;background:linear-gradient(#f2f2f2,#e2e2e2);border:1px solid #c2c2c2;box-sizing:border-box"></div>
<div class="t" style="left:597px;top:353.43px;font-size:8px;line-height:10px;width:10px;text-align:center;color:#333;letter-spacing:-0.2px">...</div>
<div style="left:613px;top:351.2px;width:170.20000000000005px;height:11.900000000000034px;background:#ebebeb;border:1px solid #b6b6b6;box-sizing:border-box;"></div>
<div class="t" style="left:615px;top:352.98px;font-size:8px;line-height:10px;color:#222">Francis MOURER</div>
<div class="t" style="left:505.6px;top:368.28px;font-size:8px;line-height:10px;color:#1a1a1a;">Destinataire</div>
<div style="left:564.3px;top:366.5px;width:29.0px;height:11.899999999999977px;background:#fff;border:1px solid #bababa;box-sizing:border-box;"></div>
<div class="t" style="left:564.3px;top:368.28px;font-size:8px;line-height:10px;width:29.0px;text-align:center;color:#222">9005</div>
<div style="left:597px;top:366.8px;width:10px;height:11.599999999999966px;background:linear-gradient(#f2f2f2,#e2e2e2);border:1px solid #c2c2c2;box-sizing:border-box"></div>
<div class="t" style="left:597px;top:368.73px;font-size:8px;line-height:10px;width:10px;text-align:center;color:#333;letter-spacing:-0.2px">...</div>
<div style="left:613px;top:366.5px;width:170.20000000000005px;height:11.899999999999977px;background:#ebebeb;border:1px solid #b6b6b6;box-sizing:border-box;"></div>
<div class="t" style="left:615px;top:368.28px;font-size:8px;line-height:10px;color:#222">EXTERNE</div>
<div class="t" style="left:877.6px;top:368.28px;font-size:8px;line-height:10px;color:#1a1a1a;">Fin prévue</div>
<div style="left:918.4px;top:366.5px;width:61.39999999999998px;height:11.899999999999977px;background:#fff;border:1px solid #bababa;box-sizing:border-box"></div>
<div class="t" style="left:918.4px;top:367.98px;font-size:8px;line-height:10px;width:50.39999999999998px;text-align:center;color:#1a1a1a">13/05/2020</div>
<div style="left:968.8px;top:366.5px;width:11px;height:11.899999999999977px;background:linear-gradient(#f0f0f0,#e0e0e0);border:1px solid #c0c0c0;box-sizing:border-box"></div>
<svg style="position:absolute;left:970.8px;top:370.45px" width="7" height="4" viewBox="0 0 7 4"><path d="M0.5 0.5 L3.5 3.2 L6.5 0.5" stroke="#555" stroke-width="0.9" fill="none"/></svg>
<div style="left:500.3px;top:389.5px;width:483.7px;height:83.10000000000002px;border:1px solid #dadada;box-shadow:inset 1px 1px 0 #fafafa,1px 1px 0 #fafafa;border-radius:2px;box-sizing:border-box"></div>
<div class="t" style="left:505px;top:384.2px;font-size:7.2px;line-height:10px;font-style:italic;color:#222;background:#f0f0f0;padding:0 2px">Évaluation ...</div>
<div class="t" style="left:505.6px;top:401.53px;font-size:8px;line-height:10px;color:#1a1a1a;">Méthode</div>
<div style="left:564.4px;top:400.4px;width:221.80000000000007px;height:10.600000000000023px;background:#fff;border:1px solid #bababa;box-sizing:border-box;"></div>
<div class="t" style="left:795px;top:401.53px;font-size:8px;line-height:10px;color:#1a1a1a;">Type</div>
<div style="left:815px;top:400.4px;width:56.299999999999955px;height:10.600000000000023px;background:#fff;border:1px solid #bababa;box-sizing:border-box;"></div>
<div class="t" style="left:815px;top:401.53px;font-size:8px;line-height:10px;width:56.299999999999955px;text-align:center;color:#222">-</div>
<div class="t" style="left:880.5px;top:401.53px;font-size:8px;line-height:10px;color:#1a1a1a;">Efficacité</div>
<div style="left:924.3px;top:400.4px;width:55.5px;height:10.600000000000023px;background:#fff;border:1px solid #bababa;box-sizing:border-box;"></div>
<div class="t" style="left:924.3px;top:401.53px;font-size:8px;line-height:10px;width:55.5px;text-align:center;color:#222">Pas évaluée</div>
<div class="t" style="left:505.6px;top:417.18px;font-size:8px;line-height:10px;color:#1a1a1a;">Évalué par</div>
<div style="left:564.4px;top:416px;width:293.20000000000005px;height:10.699999999999989px;background:#fff;border:1px solid #bababa;box-sizing:border-box;"></div>
<div style="left:861px;top:416.3px;width:10.200000000000045px;height:10.399999999999977px;background:linear-gradient(#f2f2f2,#e2e2e2);border:1px solid #c2c2c2;box-sizing:border-box"></div>
<div class="t" style="left:861px;top:417.03px;font-size:8px;line-height:10px;width:10.200000000000045px;text-align:center;color:#333;letter-spacing:-0.2px">...</div>
<div class="t" style="left:880.5px;top:417.18px;font-size:8px;line-height:10px;color:#1a1a1a;">Évalué le</div>
<div style="left:924.3px;top:415.6px;width:55.5px;height:11.399999999999977px;background:#fff;border:1px solid #bababa;box-sizing:border-box"></div>
<div class="t" style="left:924.3px;top:416.83px;font-size:8px;line-height:10px;width:44.5px;text-align:center;color:#1a1a1a">00/00/0000</div>
<div style="left:968.8px;top:415.6px;width:11px;height:11.399999999999977px;background:linear-gradient(#f0f0f0,#e0e0e0);border:1px solid #c0c0c0;box-sizing:border-box"></div>
<svg style="position:absolute;left:970.8px;top:419.3px" width="7" height="4" viewBox="0 0 7 4"><path d="M0.5 0.5 L3.5 3.2 L6.5 0.5" stroke="#555" stroke-width="0.9" fill="none"/></svg>
<div class="t" style="left:505.6px;top:432.83px;font-size:8px;line-height:10px;color:#1a1a1a;">Commentaires</div>
<div style="left:564.4px;top:431px;width:415.4px;height:39.5px;background:#fff;border:1px solid #bababa;box-sizing:border-box"></div>
<svg style="position:absolute;left:559.5px;top:464.5px" width="11" height="10" viewBox="0 0 11 10"><line x1="1" y1="9" x2="4" y2="6" stroke="#6a7f9c" stroke-width="1.3"/><circle cx="6.5" cy="3.5" r="2.7" fill="#e8f0ff" stroke="#4d6fc4" stroke-width="1"/><path d="M5 3.5h3M6.5 2v3" stroke="#4d6fc4" stroke-width="0.7"/></svg>
<div style="left:500.3px;top:480.7px;width:483.7px;height:117.30000000000001px;border:1px solid #dadada;box-shadow:inset 1px 1px 0 #fafafa,1px 1px 0 #fafafa;border-radius:2px;box-sizing:border-box"></div>
<div class="t" style="left:505px;top:475.4px;font-size:7.2px;line-height:10px;font-style:italic;color:#222;background:#f0f0f0;padding:0 2px">Résultat ...</div>
<div class="t" style="left:505.6px;top:489.83px;font-size:8px;line-height:10px;color:#1a1a1a;">Résultat</div>
<div style="left:564.4px;top:488.4px;width:415.4px;height:36.9px;background:#fff;border:1px solid #bababa;box-sizing:border-box"></div>
<div class="t" style="left:565.6px;top:489.63px;font-size:8px;line-height:10px;color:#1a1a1a">Retour des cartes le 25/05 et contrôle visuel découpe ok le 26/05</div>
<svg style="position:absolute;left:559.5px;top:519.5px" width="11" height="10" viewBox="0 0 11 10"><line x1="1" y1="9" x2="4" y2="6" stroke="#6a7f9c" stroke-width="1.3"/><circle cx="6.5" cy="3.5" r="2.7" fill="#e8f0ff" stroke="#4d6fc4" stroke-width="1"/><path d="M5 3.5h3M6.5 2v3" stroke="#4d6fc4" stroke-width="0.7"/></svg>
<div class="t" style="left:505.6px;top:531.33px;font-size:8px;line-height:10px;color:#1a1a1a;">Commentaires</div>
<div style="left:564.4px;top:529.6px;width:415.4px;height:37.4px;background:#fff;border:1px solid #bababa;box-sizing:border-box"></div>
<svg style="position:absolute;left:559.5px;top:561.5px" width="11" height="10" viewBox="0 0 11 10"><line x1="1" y1="9" x2="4" y2="6" stroke="#6a7f9c" stroke-width="1.3"/><circle cx="6.5" cy="3.5" r="2.7" fill="#e8f0ff" stroke="#4d6fc4" stroke-width="1"/><path d="M5 3.5h3M6.5 2v3" stroke="#4d6fc4" stroke-width="0.7"/></svg>
<div class="t" style="left:505.6px;top:572.58px;font-size:8px;line-height:10px;color:#1a1a1a;">Clôturée par</div>
<div style="left:564.3px;top:571.2px;width:29.0px;height:11.099999999999909px;background:#fff;border:1px solid #bababa;box-sizing:border-box;"></div>
<div class="t" style="left:564.3px;top:572.58px;font-size:8px;line-height:10px;width:29.0px;text-align:center;color:#222">9007</div>
<div style="left:597px;top:571.5px;width:10px;height:10.799999999999955px;background:linear-gradient(#f2f2f2,#e2e2e2);border:1px solid #c2c2c2;box-sizing:border-box"></div>
<div class="t" style="left:597px;top:572.63px;font-size:8px;line-height:10px;width:10px;text-align:center;color:#333;letter-spacing:-0.2px">...</div>
<div style="left:613px;top:571.2px;width:170.20000000000005px;height:11.099999999999909px;background:#ebebeb;border:1px solid #b6b6b6;box-sizing:border-box;"></div>
<div class="t" style="left:615px;top:572.58px;font-size:8px;line-height:10px;color:#222">Francis MOURER</div>
<div class="t" style="left:789.6px;top:572.58px;font-size:8px;line-height:10px;color:#1a1a1a;">Action clôturée ?</div>
<div style="left:859.5px;top:571.5px;width:9px;height:9px;background:#fff;border:1px solid #555;box-sizing:border-box"></div>
<svg style="position:absolute;left:860.5px;top:572.5px" width="7" height="7" viewBox="0 0 7 7"><path d="M1 3.5 L2.8 5.3 L6 1.3" stroke="#222" stroke-width="1" fill="none"/></svg>
<div class="t" style="left:875.5px;top:572.58px;font-size:8px;line-height:10px;color:#1a1a1a;">Clôturée le</div>
<div style="left:919.2px;top:571.2px;width:60.59999999999991px;height:10.599999999999909px;background:#fff;border:1px solid #bababa;box-sizing:border-box"></div>
<div class="t" style="left:919.2px;top:572.03px;font-size:8px;line-height:10px;width:49.59999999999991px;text-align:center;color:#1a1a1a">26/05/2020</div>
<div style="left:968.8px;top:571.2px;width:11px;height:10.599999999999909px;background:linear-gradient(#f0f0f0,#e0e0e0);border:1px solid #c0c0c0;box-sizing:border-box"></div>
<svg style="position:absolute;left:970.8px;top:574.5px" width="7" height="4" viewBox="0 0 7 4"><path d="M0.5 0.5 L3.5 3.2 L6.5 0.5" stroke="#555" stroke-width="0.9" fill="none"/></svg>
<div class="t" style="left:790.5px;top:587.73px;font-size:8px;line-height:10px;color:#1a1a1a;">Temps total imputé sur l'action</div>
<div style="left:919.2px;top:586.2px;width:60.59999999999991px;height:11.399999999999977px;background:#ebebeb;border:1px solid #b6b6b6;box-sizing:border-box;"></div>
<div class="t" style="left:919.2px;top:587.73px;font-size:8px;line-height:10px;width:58.59999999999991px;text-align:right;color:#222">0,33</div>
<svg style="position:absolute;left:95px;top:398px" width="30" height="30" viewBox="95 398 30 30"><circle cx="110.6" cy="409.8" r="3.4" fill="none" stroke="#2a96e8" stroke-width="2.4"/><path d="M101.6 410.1 L101.6 420.5 L104 418.3 L105.6 421.5 L107 420.8 L105.5 417.6 L108.5 417.4 Z" fill="#fff" stroke="#1a2030" stroke-width="0.8" stroke-linejoin="round"/></svg>
</body></html>
